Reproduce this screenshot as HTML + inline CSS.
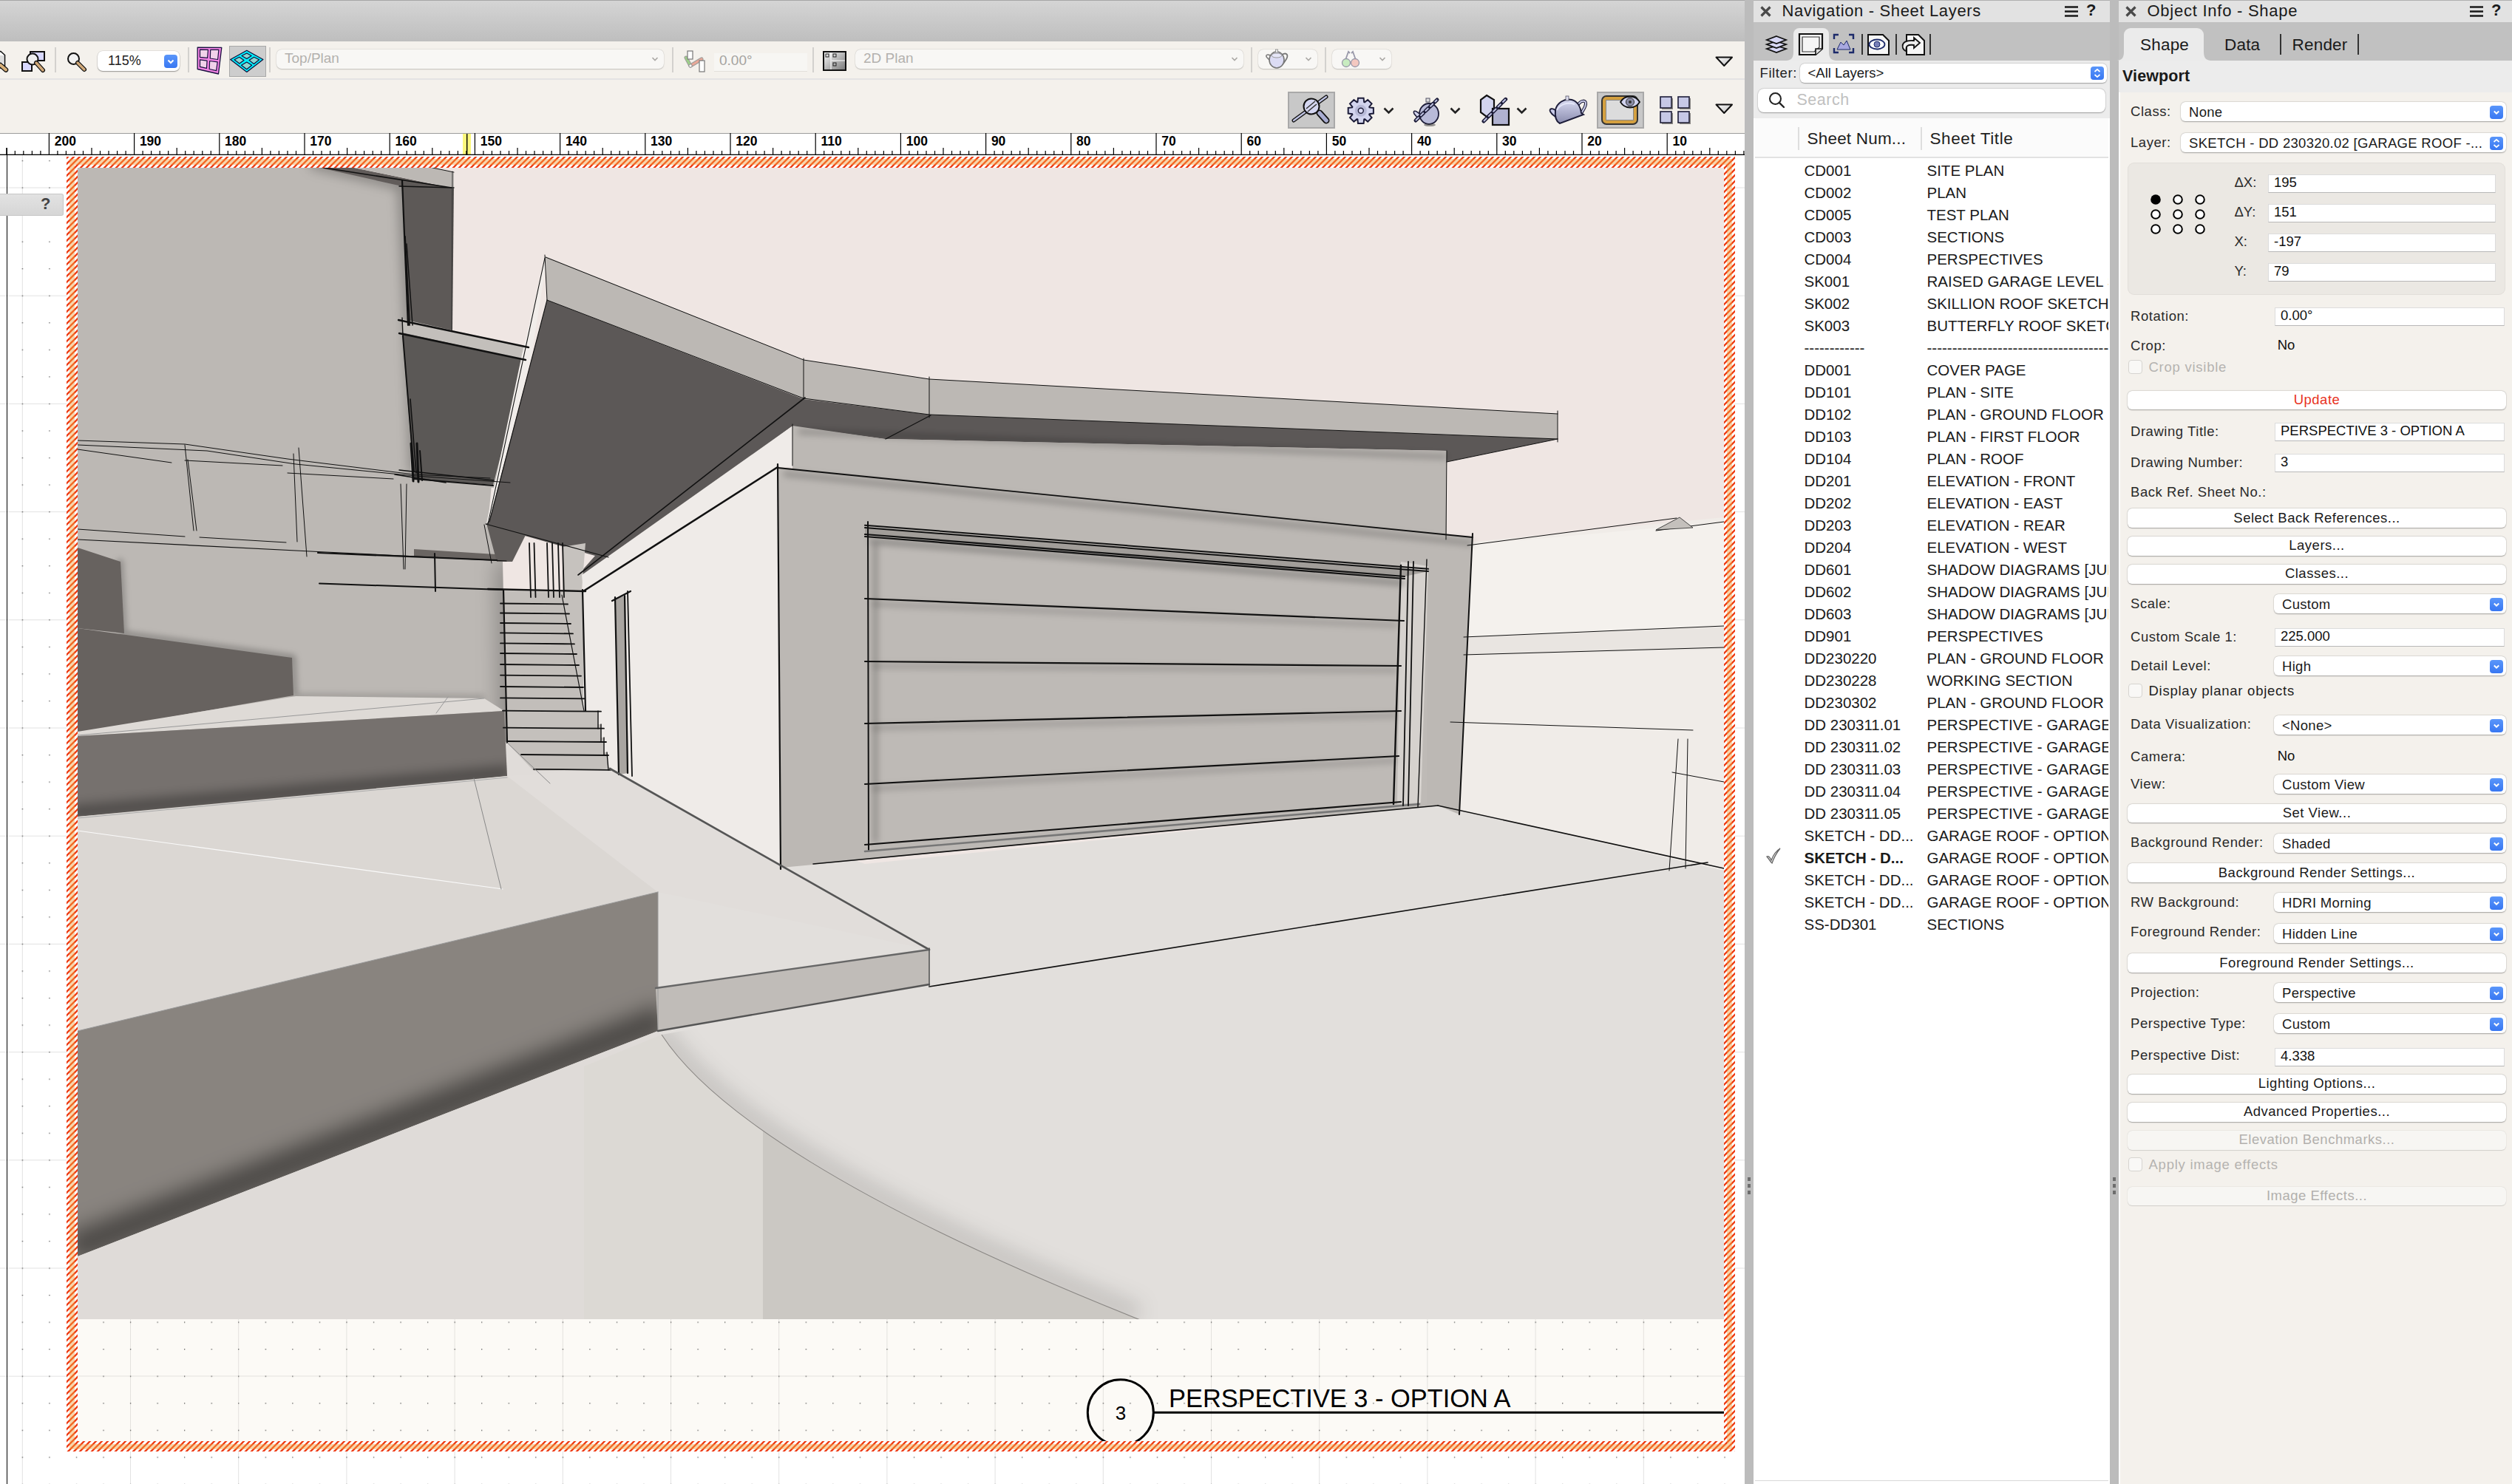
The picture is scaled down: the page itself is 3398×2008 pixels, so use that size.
<!DOCTYPE html>
<html><head><meta charset="utf-8"><style>
html,body{margin:0;padding:0;width:3398px;height:2008px;overflow:hidden;background:#fff;font-family:'Liberation Sans',sans-serif;}
</style></head><body>
<div style="position:absolute;left:0px;top:0px;width:2360px;height:56px;background:linear-gradient(#d5d5d5,#bebebe);"></div>
<div style="position:absolute;left:0px;top:0px;width:2360px;height:1px;background:#a6a6a6;"></div>
<div style="position:absolute;left:0px;top:56px;width:2360px;height:124px;background:#f4f1ec;"></div>
<div style="position:absolute;left:0px;top:106px;width:2360px;height:2px;background:#e4e3e4;"></div>
<svg style="position:absolute;left:0px;top:62px;overflow:visible" width="14" height="38" viewBox="0 0 14 38"><path d="M-4 8 L1 7.5 L6.5 12.5 L6.5 30 L-4 30 Z" fill="#fff" stroke="#111" stroke-width="1.6"/><rect x="-2" y="13" width="7" height="10" fill="#ddd"/><path d="M0.5 26 L8 32.5" stroke="#111" stroke-width="6.5" stroke-linecap="round"/><path d="M0.5 26 L8 32.5" stroke="#d8b078" stroke-width="4" stroke-linecap="round"/></svg>
<svg style="position:absolute;left:29px;top:68px;overflow:visible" width="33" height="30" viewBox="0 0 33 30"><rect x="12" y="2" width="19" height="12" fill="#d8d8ff" stroke="#111" stroke-width="2"/><rect x="1" y="16" width="13" height="12" fill="#d8d8ff" stroke="#111" stroke-width="2"/><circle cx="15" cy="12" r="7.5" fill="#eee" stroke="#111" stroke-width="2"/><path d="M20 17 L29 27" stroke="#111" stroke-width="6" stroke-linecap="round"/><path d="M20 17 L29 27" stroke="#d0a878" stroke-width="3.5" stroke-linecap="round"/></svg>
<div style="position:absolute;left:74px;top:64px;width:2px;height:34px;background:#d3d1ce;"></div>
<svg style="position:absolute;left:90px;top:70px;overflow:visible" width="28" height="28" viewBox="0 0 28 28"><circle cx="9.5" cy="9.5" r="7.5" fill="#f2f2f2" stroke="#111" stroke-width="2"/><path d="M15 15 L24 24" stroke="#111" stroke-width="6" stroke-linecap="round"/><path d="M15 15 L24 24" stroke="#d0a878" stroke-width="3.5" stroke-linecap="round"/></svg>
<div style="position:absolute;left:132px;top:69px;width:111px;height:27px;background:#fff;border-radius:7px;box-shadow:0 1px 1.5px rgba(0,0,0,.35),0 0 0 .5px rgba(0,0,0,.12);"></div>
<div style="position:absolute;left:146.0px;top:72.4px;font-size:18px;line-height:1.15;white-space:nowrap;color:#222;">115%</div>
<div style="position:absolute;left:222px;top:74px;width:18px;height:18px;background:linear-gradient(#5a96fa,#3877f2);border-radius:4px;"></div>
<svg style="position:absolute;left:222px;top:74px;overflow:visible" width="18" height="18" viewBox="0 0 18 18"><path d="M5.5 7.5 L9 11 L12.5 7.5" stroke="#fff" stroke-width="2" fill="none"/></svg>
<div style="position:absolute;left:254px;top:64px;width:2px;height:34px;background:#d3d1ce;"></div>
<svg style="position:absolute;left:0px;top:0px;overflow:visible" width="400" height="110" viewBox="0 0 400 110"><polygon points="267.2,64.1 299.8,64.3 295.5,100 267.2,93.5" fill="#f284e4" stroke="#1a1040" stroke-width="1.3" stroke-linejoin="round"/><polygon points="270.5,67.2 281.5,67.4 280.6,78.4 270.5,77.3" fill="#f1d2ea" stroke="#1a1040" stroke-width="1.2" stroke-linejoin="round"/><polygon points="284.7,67.4 295.9,67.4 294.6,80.5 284.3,79" fill="#f1d2ea" stroke="#1a1040" stroke-width="1.2" stroke-linejoin="round"/><polygon points="270.5,80.8 280.1,82.1 279.5,92.4 270.5,90.4" fill="#f1d2ea" stroke="#1a1040" stroke-width="1.2" stroke-linejoin="round"/><polygon points="283.6,82.5 294.2,83.8 292.6,95.7 283.2,93.5" fill="#f1d2ea" stroke="#1a1040" stroke-width="1.2" stroke-linejoin="round"/></svg>
<div style="position:absolute;left:310px;top:62px;width:50px;height:42px;background:#cdcdcd;border:1.7px solid #a8a8a8;box-sizing:border-box;"></div>
<svg style="position:absolute;left:0px;top:0px;overflow:visible" width="400" height="110" viewBox="0 0 400 110"><polygon points="311.7,80.5 333.8,68.3 355.9,80.5 333.8,97.4" fill="#00f0ff" stroke="#10103a" stroke-width="1.3" stroke-linejoin="round"/><polygon points="327,75.5 333.8,72 340.1,75.5 333.8,79.5" fill="#8ed6d2" stroke="#10103a" stroke-width="1.2" stroke-linejoin="round"/><polygon points="317,80.8 323.7,77.3 330,81.4 323.9,86" fill="#8ed6d2" stroke="#10103a" stroke-width="1.2" stroke-linejoin="round"/><polygon points="337,81.4 343.6,77.3 350.6,80.8 343.4,86.5" fill="#8ed6d2" stroke="#10103a" stroke-width="1.2" stroke-linejoin="round"/><polygon points="326.5,88.2 333.8,84 340.6,88.2 333.8,93.7" fill="#8ed6d2" stroke="#10103a" stroke-width="1.2" stroke-linejoin="round"/></svg>
<div style="position:absolute;left:364px;top:64px;width:2px;height:34px;background:#d3d1ce;"></div>
<div style="position:absolute;left:374px;top:67px;width:524px;height:26px;background:#f8f7f5;border-radius:7px;box-shadow:0 .5px 1.5px rgba(0,0,0,.18),0 0 0 .5px rgba(0,0,0,.06);"></div><div style="position:absolute;left:385.0px;top:68.4px;font-size:19px;line-height:1.15;white-space:nowrap;color:#b3b1ae;">Top/Plan</div><svg style="position:absolute;left:881px;top:76px;overflow:visible" width="10" height="8" viewBox="0 0 10 8"><path d="M1.5 2 L5 5.5 L8.5 2" stroke="#a9a7a4" stroke-width="1.6" fill="none"/></svg>
<div style="position:absolute;left:909px;top:64px;width:2px;height:34px;background:#d3d1ce;"></div>
<svg style="position:absolute;left:922px;top:68px;overflow:visible" width="34" height="32" viewBox="0 0 34 32"><path d="M6 10 L12 21 L27 12" stroke="#555" stroke-width="5" fill="none" stroke-linecap="round" stroke-linejoin="round" opacity=".55"/><path d="M6 10 L12 21" stroke="#9ed08a" stroke-width="3" stroke-linecap="round"/><path d="M12 21 L27 12" stroke="#eaa898" stroke-width="3" stroke-linecap="round"/><rect x="8" y="1" width="7" height="11" fill="#fff" stroke="#777" stroke-width="1.2"/><rect x="24" y="14" width="7" height="15" fill="#fff" stroke="#777" stroke-width="1.2"/><circle cx="12" cy="21" r="2.2" fill="#fff" stroke="#888"/></svg>
<div style="position:absolute;left:966px;top:72px;width:126px;height:25px;background:#f7f6f3;border-bottom:1px solid #e2dfdb;box-sizing:border-box;"></div>
<div style="position:absolute;left:973.0px;top:71.4px;font-size:19px;line-height:1.15;white-space:nowrap;color:#a5a3a0;">0.00°</div>
<div style="position:absolute;left:1099px;top:64px;width:2px;height:34px;background:#d3d1ce;"></div>
<svg style="position:absolute;left:1113px;top:69px;overflow:visible" width="32" height="27" viewBox="0 0 32 27"><defs><linearGradient id="lg1" x1="0" y1="0" x2="1" y2="1"><stop offset="0" stop-color="#fafafa"/><stop offset="1" stop-color="#777"/></linearGradient></defs><rect x="1" y="1" width="30" height="25" fill="url(#lg1)" stroke="#111" stroke-width="2"/><path d="M11 2 V25 M12 13 H30" stroke="#fff" stroke-width="1"/><rect x="4" y="4" width="4" height="4" fill="none" stroke="#222" stroke-width="1"/><rect x="14" y="4" width="4" height="4" fill="none" stroke="#222" stroke-width="1"/><rect x="14" y="16" width="4" height="4" fill="none" stroke="#222" stroke-width="1"/></svg>
<div style="position:absolute;left:1157px;top:67px;width:525px;height:26px;background:#f8f7f5;border-radius:7px;box-shadow:0 .5px 1.5px rgba(0,0,0,.18),0 0 0 .5px rgba(0,0,0,.06);"></div><div style="position:absolute;left:1168.0px;top:68.4px;font-size:19px;line-height:1.15;white-space:nowrap;color:#b3b1ae;">2D Plan</div><svg style="position:absolute;left:1665px;top:76px;overflow:visible" width="10" height="8" viewBox="0 0 10 8"><path d="M1.5 2 L5 5.5 L8.5 2" stroke="#a9a7a4" stroke-width="1.6" fill="none"/></svg>
<div style="position:absolute;left:1692px;top:64px;width:2px;height:34px;background:#d3d1ce;"></div>
<div style="position:absolute;left:1702px;top:67px;width:80px;height:26px;background:#f8f7f5;border-radius:7px;box-shadow:0 .5px 1.5px rgba(0,0,0,.18),0 0 0 .5px rgba(0,0,0,.06);"></div><svg style="position:absolute;left:1765px;top:76px;overflow:visible" width="10" height="8" viewBox="0 0 10 8"><path d="M1.5 2 L5 5.5 L8.5 2" stroke="#a9a7a4" stroke-width="1.6" fill="none"/></svg>
<svg style="position:absolute;left:1710px;top:66px;overflow:visible" width="36" height="28" viewBox="0 0 36 28"><path d="M10 10 C4 6 1 9 4 12 L9 17" fill="none" stroke="#777" stroke-width="1.5"/><path d="M24 8 C31 4 33 9 30 14 L26 20" fill="none" stroke="#777" stroke-width="1.8"/><ellipse cx="17" cy="15" rx="10" ry="11" fill="#dcdcf4" stroke="#777" stroke-width="1.6"/><ellipse cx="17" cy="9" rx="7" ry="3" fill="#e6e6f8" stroke="#999" stroke-width="1"/><rect x="15.5" y="1" width="3" height="4" fill="#eee" stroke="#888" stroke-width=".8"/></svg>
<div style="position:absolute;left:1792px;top:64px;width:2px;height:34px;background:#d3d1ce;"></div>
<div style="position:absolute;left:1802px;top:67px;width:80px;height:26px;background:#f8f7f5;border-radius:7px;box-shadow:0 .5px 1.5px rgba(0,0,0,.18),0 0 0 .5px rgba(0,0,0,.06);"></div><svg style="position:absolute;left:1865px;top:76px;overflow:visible" width="10" height="8" viewBox="0 0 10 8"><path d="M1.5 2 L5 5.5 L8.5 2" stroke="#a9a7a4" stroke-width="1.6" fill="none"/></svg>
<svg style="position:absolute;left:1812px;top:68px;overflow:visible" width="30" height="24" viewBox="0 0 30 24"><path d="M7 16 L12 2 L14 4 M23 16 L18 2 L16 4" fill="none" stroke="#99a" stroke-width="1.8"/><circle cx="9" cy="17" r="5.5" fill="#c8ecc0" stroke="#99a" stroke-width="1.3"/><circle cx="21" cy="17" r="5.5" fill="#f4c8c0" stroke="#99a" stroke-width="1.3"/><path d="M14 16 H16" stroke="#99a" stroke-width="1.5"/></svg>
<svg style="position:absolute;left:2320px;top:76px;overflow:visible" width="25" height="15" viewBox="0 0 25 15"><defs><linearGradient id="tg" x1="0" y1="0" x2="1" y2="1"><stop offset="0" stop-color="#fff"/><stop offset="1" stop-color="#bbb"/></linearGradient></defs><path d="M1.5 1.5 H23 L12.25 13 Z" fill="url(#tg)" stroke="#111" stroke-width="2" stroke-linejoin="round"/></svg>
<div style="position:absolute;left:1742px;top:124px;width:64px;height:50px;background:#c8c8c8;border:2px solid #a9a9a9;box-sizing:border-box;"></div>
<svg style="position:absolute;left:1742px;top:124px;overflow:visible" width="64" height="50" viewBox="0 0 64 50"><path d="M8 39 L52 7" stroke="#111" stroke-width="5" stroke-linecap="round"/><path d="M8 39 L52 7" stroke="#c0c4e4" stroke-width="2.2" stroke-linecap="round"/><path d="M43 29 L52 39" stroke="#111" stroke-width="9" stroke-linecap="round"/><path d="M43 29 L52 39" stroke="#a8acd0" stroke-width="5.5" stroke-linecap="round"/><circle cx="32" cy="20" r="10.5" fill="#d4d6f0" stroke="#111" stroke-width="2"/><path d="M25 23 L37 13 M27 27 L39 17" stroke="#333" stroke-width="1.5"/></svg>
<svg style="position:absolute;left:0px;top:0px;overflow:visible" width="2360" height="180" viewBox="0 0 2360 180"><polygon points="1857.9,146.0 1857.9,153.6 1852.5,154.2 1852.2,155.0 1855.6,159.2 1850.2,164.6 1846.0,161.2 1845.2,161.5 1844.6,166.9 1837.0,166.9 1836.4,161.5 1835.6,161.2 1831.4,164.6 1826.0,159.2 1829.4,155.0 1829.1,154.2 1823.7,153.6 1823.7,146.0 1829.1,145.4 1829.4,144.6 1826.0,140.4 1831.4,135.0 1835.6,138.4 1836.4,138.1 1837.0,132.7 1844.6,132.7 1845.2,138.1 1846.0,138.4 1850.2,135.0 1855.6,140.4 1852.2,144.6 1852.5,145.4" fill="#d2d4ee" stroke="#1c1c38" stroke-width="2"/><circle cx="1840.8" cy="149.8" r="8" fill="#b8bad8"/><circle cx="1840.8" cy="149.8" r="3.5" fill="#dcdcf6" stroke="#1c1c38" stroke-width="1.4"/></svg>
<svg style="position:absolute;left:1871px;top:145px;overflow:visible" width="16" height="10" viewBox="0 0 16 10"><path d="M1.5 1.5 L7.5 7.5 L13.5 1.5" stroke="#222" stroke-width="2.6" fill="none"/></svg>
<svg style="position:absolute;left:1961px;top:145px;overflow:visible" width="16" height="10" viewBox="0 0 16 10"><path d="M1.5 1.5 L7.5 7.5 L13.5 1.5" stroke="#222" stroke-width="2.6" fill="none"/></svg>
<svg style="position:absolute;left:2051px;top:145px;overflow:visible" width="16" height="10" viewBox="0 0 16 10"><path d="M1.5 1.5 L7.5 7.5 L13.5 1.5" stroke="#222" stroke-width="2.6" fill="none"/></svg>
<svg style="position:absolute;left:1910px;top:130px;overflow:visible" width="44" height="42" viewBox="0 0 44 42"><ellipse cx="23" cy="24" rx="13" ry="14" fill="#b8bad8" stroke="#1c1c38" stroke-width="1.8"/><path d="M10 24 C4 18 1 20 3 24 L8 30" fill="#d2d4ee" stroke="#1c1c38" stroke-width="1.6"/><rect x="19" y="3" width="5" height="5" fill="#ddd" stroke="#556" stroke-width="1"/><path d="M5 33 L34 5" stroke="#1c1c38" stroke-width="5" stroke-dasharray="6 3" stroke-linecap="round"/><path d="M5 33 L34 5" stroke="#c0c4e4" stroke-width="2" stroke-dasharray="6 3"/><ellipse cx="24" cy="39" rx="8" ry="2" fill="#333" opacity=".5"/></svg>
<svg style="position:absolute;left:2000px;top:126px;overflow:visible" width="46" height="46" viewBox="0 0 46 46"><path d="M11 3 L21 9 L21 26 L11 32 L3 26 L3 9 Z" fill="#d2d4ee" stroke="#111" stroke-width="2.2"/><rect x="19" y="21" width="22" height="22" fill="#b0b2d0" stroke="#111" stroke-width="2.2"/><path d="M7 38 L38 7" stroke="#1c1c38" stroke-width="5" stroke-dasharray="6 3" stroke-linecap="round"/><path d="M7 38 L38 7" stroke="#c0c4e4" stroke-width="2" stroke-dasharray="6 3"/></svg>
<svg style="position:absolute;left:2094px;top:129px;overflow:visible" width="50" height="40" viewBox="0 0 50 40"><defs><linearGradient id="tpg" x1="0" y1="0" x2="0" y2="1"><stop offset="0" stop-color="#d8daf2"/><stop offset="1" stop-color="#8a8cae"/></linearGradient></defs><path d="M40 14 C44 6 52 6 51 12 C50 18 46 22 43 27" fill="none" stroke="#1c1c38" stroke-width="4.2"/><path d="M40 14 C44 6 52 6 51 12 C50 18 46 22 43 27" fill="none" stroke="#c8cae8" stroke-width="2"/><path d="M12 22 C6 16 1 18 3 22 C5 26 9 28 11 30" fill="#c8cae8" stroke="#1c1c38" stroke-width="1.8"/><path d="M10 20 C12 10 22 4 32 6 C40 8 44 16 45 24 L48 26 L16 38 C12 36 9 30 10 20 Z" fill="url(#tpg)" stroke="#1c1c38" stroke-width="2"/><path d="M12 20 C16 12 26 9 36 12" fill="none" stroke="#e4e6f8" stroke-width="2"/><rect x="24" y="1" width="4" height="6" fill="#dde" stroke="#556" stroke-width=".8"/></svg>
<div style="position:absolute;left:2160px;top:124px;width:64px;height:50px;background:#c8c8c8;border:2px solid #a9a9a9;box-sizing:border-box;"></div>
<svg style="position:absolute;left:2160px;top:124px;overflow:visible" width="64" height="50" viewBox="0 0 64 50"><rect x="7" y="6" width="48" height="38" rx="6" fill="#d4a040" stroke="#333" stroke-width="2"/><rect x="12.5" y="11.5" width="37" height="27" fill="#dcdcdc" stroke="#888" stroke-width="1"/><path d="M32 14 C38 4 52 4 58 14 C52 24 38 24 32 14 Z" fill="#d0d2ee" stroke="#111" stroke-width="1.8"/><circle cx="45" cy="14" r="5.5" fill="#8c8ea8" stroke="#333" stroke-width="1"/><circle cx="45" cy="14" r="2" fill="#333"/></svg>
<svg style="position:absolute;left:2244px;top:129px;overflow:visible" width="46" height="42" viewBox="0 0 46 42"><g fill="#c6c8e6" stroke="#1c1c38" stroke-width="1.6"><rect x="2" y="2" width="15" height="15"/><rect x="26" y="2" width="15" height="15"/><rect x="2" y="22" width="15" height="15"/><rect x="26" y="22" width="15" height="15"/></g><g fill="#444" opacity=".6"><rect x="17" y="4" width="2" height="15"/><rect x="4" y="17" width="15" height="2"/><rect x="41" y="4" width="2" height="15"/><rect x="28" y="17" width="15" height="2"/><rect x="17" y="24" width="2" height="15"/><rect x="4" y="37" width="15" height="2"/><rect x="41" y="24" width="2" height="15"/><rect x="28" y="37" width="15" height="2"/></g></svg>
<svg style="position:absolute;left:2320px;top:140px;overflow:visible" width="25" height="15" viewBox="0 0 25 15"><defs><linearGradient id="tg" x1="0" y1="0" x2="1" y2="1"><stop offset="0" stop-color="#fff"/><stop offset="1" stop-color="#bbb"/></linearGradient></defs><path d="M1.5 1.5 H23 L12.25 13 Z" fill="url(#tg)" stroke="#111" stroke-width="2" stroke-linejoin="round"/></svg>
<svg style="position:absolute;left:0px;top:180px;overflow:visible" width="2360" height="31" viewBox="0 0 2360 31"><rect x="0" y="0" width="2360" height="30" fill="#fff"/><rect x="0" y="0" width="2360" height="1" fill="#9c9c9c"/><rect x="626" y="1" width="11" height="28" fill="#fbf77c"/><path d="M8.8 20V29 M20.3 24V29 M31.8 24V29 M43.4 24V29 M54.9 24V29 M66.4 0V29 M77.9 24V29 M89.4 24V29 M101.0 24V29 M112.5 24V29 M124.0 20V29 M135.5 24V29 M147.0 24V29 M158.6 24V29 M170.1 24V29 M181.6 0V29 M193.1 24V29 M204.6 24V29 M216.2 24V29 M227.7 24V29 M239.2 20V29 M250.7 24V29 M262.2 24V29 M273.8 24V29 M285.3 24V29 M296.8 0V29 M308.3 24V29 M319.8 24V29 M331.4 24V29 M342.9 24V29 M354.4 20V29 M365.9 24V29 M377.4 24V29 M389.0 24V29 M400.5 24V29 M412.0 0V29 M423.5 24V29 M435.0 24V29 M446.6 24V29 M458.1 24V29 M469.6 20V29 M481.1 24V29 M492.6 24V29 M504.2 24V29 M515.7 24V29 M527.2 0V29 M538.7 24V29 M550.2 24V29 M561.8 24V29 M573.3 24V29 M584.8 20V29 M596.3 24V29 M607.8 24V29 M619.4 24V29 M630.9 24V29 M642.4 0V29 M653.9 24V29 M665.4 24V29 M677.0 24V29 M688.5 24V29 M700.0 20V29 M711.5 24V29 M723.0 24V29 M734.6 24V29 M746.1 24V29 M757.6 0V29 M769.1 24V29 M780.6 24V29 M792.2 24V29 M803.7 24V29 M815.2 20V29 M826.7 24V29 M838.2 24V29 M849.8 24V29 M861.3 24V29 M872.8 0V29 M884.3 24V29 M895.8 24V29 M907.4 24V29 M918.9 24V29 M930.4 20V29 M941.9 24V29 M953.4 24V29 M965.0 24V29 M976.5 24V29 M988.0 0V29 M999.5 24V29 M1011.0 24V29 M1022.6 24V29 M1034.1 24V29 M1045.6 20V29 M1057.1 24V29 M1068.6 24V29 M1080.2 24V29 M1091.7 24V29 M1103.2 0V29 M1114.7 24V29 M1126.2 24V29 M1137.8 24V29 M1149.3 24V29 M1160.8 20V29 M1172.3 24V29 M1183.8 24V29 M1195.4 24V29 M1206.9 24V29 M1218.4 0V29 M1229.9 24V29 M1241.4 24V29 M1253.0 24V29 M1264.5 24V29 M1276.0 20V29 M1287.5 24V29 M1299.0 24V29 M1310.6 24V29 M1322.1 24V29 M1333.6 0V29 M1345.1 24V29 M1356.6 24V29 M1368.2 24V29 M1379.7 24V29 M1391.2 20V29 M1402.7 24V29 M1414.2 24V29 M1425.8 24V29 M1437.3 24V29 M1448.8 0V29 M1460.3 24V29 M1471.8 24V29 M1483.4 24V29 M1494.9 24V29 M1506.4 20V29 M1517.9 24V29 M1529.4 24V29 M1541.0 24V29 M1552.5 24V29 M1564.0 0V29 M1575.5 24V29 M1587.0 24V29 M1598.6 24V29 M1610.1 24V29 M1621.6 20V29 M1633.1 24V29 M1644.6 24V29 M1656.2 24V29 M1667.7 24V29 M1679.2 0V29 M1690.7 24V29 M1702.2 24V29 M1713.8 24V29 M1725.3 24V29 M1736.8 20V29 M1748.3 24V29 M1759.8 24V29 M1771.4 24V29 M1782.9 24V29 M1794.4 0V29 M1805.9 24V29 M1817.4 24V29 M1829.0 24V29 M1840.5 24V29 M1852.0 20V29 M1863.5 24V29 M1875.0 24V29 M1886.6 24V29 M1898.1 24V29 M1909.6 0V29 M1921.1 24V29 M1932.6 24V29 M1944.2 24V29 M1955.7 24V29 M1967.2 20V29 M1978.7 24V29 M1990.2 24V29 M2001.8 24V29 M2013.3 24V29 M2024.8 0V29 M2036.3 24V29 M2047.8 24V29 M2059.4 24V29 M2070.9 24V29 M2082.4 20V29 M2093.9 24V29 M2105.4 24V29 M2117.0 24V29 M2128.5 24V29 M2140.0 0V29 M2151.5 24V29 M2163.0 24V29 M2174.6 24V29 M2186.1 24V29 M2197.6 20V29 M2209.1 24V29 M2220.6 24V29 M2232.2 24V29 M2243.7 24V29 M2255.2 0V29 M2266.7 24V29 M2278.2 24V29 M2289.8 24V29 M2301.3 24V29 M2312.8 20V29 M2324.3 24V29 M2335.8 24V29 M2347.4 24V29 M2358.9 24V29" stroke="#000" stroke-width="1.2" fill="none"/><rect x="631" y="1" width="1.4" height="28" fill="#000"/><rect x="0" y="28.7" width="2360" height="1.4" fill="#000"/><text x="73.7" y="17" font-family="Liberation Sans" font-weight="bold" font-size="17.5">200</text><text x="188.9" y="17" font-family="Liberation Sans" font-weight="bold" font-size="17.5">190</text><text x="304.1" y="17" font-family="Liberation Sans" font-weight="bold" font-size="17.5">180</text><text x="419.3" y="17" font-family="Liberation Sans" font-weight="bold" font-size="17.5">170</text><text x="534.5" y="17" font-family="Liberation Sans" font-weight="bold" font-size="17.5">160</text><text x="649.7" y="17" font-family="Liberation Sans" font-weight="bold" font-size="17.5">150</text><text x="764.9" y="17" font-family="Liberation Sans" font-weight="bold" font-size="17.5">140</text><text x="880.1" y="17" font-family="Liberation Sans" font-weight="bold" font-size="17.5">130</text><text x="995.3" y="17" font-family="Liberation Sans" font-weight="bold" font-size="17.5">120</text><text x="1110.5" y="17" font-family="Liberation Sans" font-weight="bold" font-size="17.5">110</text><text x="1225.7" y="17" font-family="Liberation Sans" font-weight="bold" font-size="17.5">100</text><text x="1340.9" y="17" font-family="Liberation Sans" font-weight="bold" font-size="17.5">90</text><text x="1456.1" y="17" font-family="Liberation Sans" font-weight="bold" font-size="17.5">80</text><text x="1571.3" y="17" font-family="Liberation Sans" font-weight="bold" font-size="17.5">70</text><text x="1686.5" y="17" font-family="Liberation Sans" font-weight="bold" font-size="17.5">60</text><text x="1801.7" y="17" font-family="Liberation Sans" font-weight="bold" font-size="17.5">50</text><text x="1916.9" y="17" font-family="Liberation Sans" font-weight="bold" font-size="17.5">40</text><text x="2032.1" y="17" font-family="Liberation Sans" font-weight="bold" font-size="17.5">30</text><text x="2147.3" y="17" font-family="Liberation Sans" font-weight="bold" font-size="17.5">20</text><text x="2262.5" y="17" font-family="Liberation Sans" font-weight="bold" font-size="17.5">10</text></svg>
<svg style="position:absolute;left:0px;top:210px;overflow:visible" width="2360" height="1798" viewBox="0 0 2360 1798"><defs><pattern id="gdots" patternUnits="userSpaceOnUse" width="36.55" height="36.55" x="29.7" y="6.85"><rect x="0" y="0" width="1.3" height="1.3" fill="#3a3a3a"/></pattern></defs><rect x="0" y="0" width="2360" height="1798" fill="#fff"/><path d="M30.3 0V1798 M176.5 0V1798 M322.7 0V1798 M468.9 0V1798 M615.1 0V1798 M761.3 0V1798 M907.5 0V1798 M1053.7 0V1798 M1199.9 0V1798 M1346.1 0V1798 M1492.3 0V1798 M1638.5 0V1798 M1784.7 0V1798 M1930.9 0V1798 M2077.1 0V1798 M2223.3 0V1798 M0 44.0H2360 M0 190.2H2360 M0 336.4H2360 M0 482.6H2360 M0 628.8H2360 M0 775.0H2360 M0 921.2H2360 M0 1067.4H2360 M0 1213.6H2360 M0 1359.8H2360 M0 1506.0H2360 M0 1652.2H2360" stroke="#e2e2e2" stroke-width="1" fill="none"/><rect x="0" y="0" width="2360" height="1798" fill="url(#gdots)" opacity=".85"/></svg>
<div style="position:absolute;left:9px;top:200px;width:1px;height:1808px;background:#000;"></div>
<svg style="position:absolute;left:0;top:0" width="2360" height="2008" viewBox="0 0 2360 2008"><defs><filter id="blur4" filterUnits="userSpaceOnUse" x="0" y="0" width="2400" height="2000"><feGaussianBlur stdDeviation="4"/></filter><filter id="blur8" filterUnits="userSpaceOnUse" x="0" y="0" width="2400" height="2000"><feGaussianBlur stdDeviation="8"/></filter><filter id="blur14" filterUnits="userSpaceOnUse" x="0" y="0" width="2400" height="2000"><feGaussianBlur stdDeviation="14"/></filter></defs>
<defs><pattern id="hatch" patternUnits="userSpaceOnUse" width="8" height="8" patternTransform="translate(0,0)"><path d="M-2 2 L2 -2 M0 8 L8 0 M6 10 L10 6" stroke="#ee3a12" stroke-width="2.3"/></pattern><linearGradient id="gshadeL" x1="0" y1="0" x2="1" y2="0"><stop offset="0" stop-color="#bcb8b4"/><stop offset="1" stop-color="#c4c0bc"/></linearGradient></defs>
<path fill-rule="evenodd" fill="#fff" d="M90 212 H2347 V1964 H90 Z M105 227 H2332 V1950 H105 Z"/>
<path fill-rule="evenodd" fill="#f8d6ac" d="M94 215 H2343 V1961 H94 Z M101 223 H2336 V1954 H101 Z"/>
<path fill-rule="evenodd" fill="url(#hatch)" d="M90 212 H2347 V1964 H90 Z M105 227 H2332 V1950 H105 Z"/>
<defs><pattern id="hatch2" patternUnits="userSpaceOnUse" width="8" height="8"><path d="M-2 2 L2 -2 M0 8 L8 0 M6 10 L10 6" stroke="#f26a26" stroke-width="2.4"/></pattern></defs>
<path fill-rule="evenodd" fill="#f8d6ac" d="M94 215 H2343 V1961 H94 Z M101 223 H2336 V1954 H101 Z"/>
<path fill-rule="evenodd" fill="url(#hatch2)" d="M94 215 H2343 V1961 H94 Z M101 223 H2336 V1954 H101 Z"/>
<rect x="105" y="1785" width="2227" height="165" fill="#fcfaf6"/>
<path d="M176.5 1785V1950 M322.7 1785V1950 M468.9 1785V1950 M615.1 1785V1950 M761.3 1785V1950 M907.5 1785V1950 M1053.7 1785V1950 M1199.9 1785V1950 M1346.1 1785V1950 M1492.3 1785V1950 M1638.5 1785V1950 M1784.7 1785V1950 M1930.9 1785V1950 M2077.1 1785V1950 M2223.3 1785V1950 M105 1862H2332" stroke="#e4e2de" stroke-width="1"/>
<rect x="105" y="1785" width="2227" height="165" fill="url(#gdots2)" opacity=".85"/>
<defs><pattern id="gdots2" patternUnits="userSpaceOnUse" width="36.55" height="36.55" x="29.7" y="34.10"><rect x="0" y="0" width="1.3" height="1.3" fill="#3a3a3a"/></pattern></defs>
<svg x="105" y="227" width="2227" height="1558" viewBox="105 227 2227 1558" overflow="hidden">
<polygon points="105,227 2332,227 2332,1785 105,1785" fill="#efe6e3" />
<polygon points="1975,735 2332,700 2332,1180 1945,1090" fill="#f0ece8" />
<polygon points="1979,862 2332,848 2332,878 1978,887" fill="#e9e5e1" />
<polygon points="1984,738 2332,706 2332,848 1979,862" fill="#f4f1ed" />
<polygon points="105,1105 686,1050 825,1040 1170,1169 1945,1090 2332,1178 2332,1785 105,1785" fill="#e2dfdc" />
<polygon points="105,227 438,227 544,246 552,440 545,432 544,450 560,640 666,645 660,709 680,760 686,1050 105,1105" fill="#bcb8b4" />
<clipPath id="cp1"><polygon points="105,227 438,227 544,246 552,440 545,432 544,450 560,640 666,645 660,709 680,760 686,1050 105,1105"/></clipPath><g clip-path="url(#cp1)"><polyline points="420,220 545,250 555,440 562,640" fill="none" stroke="#000" stroke-opacity="0.3" stroke-width="14" filter="url(#blur8)"/></g>
<clipPath id="cp2"><polygon points="105,227 438,227 544,246 552,440 545,432 544,450 560,640 666,645 660,709 680,760 686,1050 105,1105"/></clipPath><g clip-path="url(#cp2)"><polyline points="162,757 167,858 396,890 398,942" fill="none" stroke="#000" stroke-opacity="0.28" stroke-width="8" filter="url(#blur4)"/></g>
<clipPath id="cp3"><polygon points="105,227 438,227 544,246 552,440 545,432 544,450 560,640 666,645 660,709 680,760 686,1050 105,1105"/></clipPath><g clip-path="url(#cp3)"><polyline points="686,760 690,1050" fill="none" stroke="#000" stroke-opacity="0.25" stroke-width="30" filter="url(#blur14)"/></g>
<clipPath id="cp4"><polygon points="105,227 438,227 544,246 552,440 545,432 544,450 560,640 666,645 660,709 680,760 686,1050 105,1105"/></clipPath><g clip-path="url(#cp4)"><polyline points="400,943 655,945" fill="none" stroke="#000" stroke-opacity="0.15" stroke-width="10" filter="url(#blur4)"/></g>
<polygon points="433,227 479,227 612,254.6 544,252" fill="#615c5a" />
<polygon points="479,227 585,227 614,233 614,255 611,254" fill="#bcb8b4" />
<polygon points="544,246 614,255 612,447 552,440" fill="#5d5957" />
<polygon points="545,432 715,470 711,487 544,450" fill="#c3bfbb" />
<polygon points="555,600 700,600 690,660 555,660" fill="#bcb8b4" />
<polygon points="544,450 711,487 667,656 560,648" fill="#5b5856" />
<polygon points="560,743 686,751 686,759 560,753" fill="#6a6562" />
<polygon points="706,480 737,349 740,349 719,480 662,706 657,713" fill="#f1edea" />
<polygon points="711,487 735,380 706,480" fill="#f1edea" />
<polygon points="738,347 1087,487 1257,513 2107,560 2107,594 1257,561 1087,540 740,406" fill="#bcb8b4" />
<polygon points="740,406 1087,540 1257,561 2107,594 1957,625 1957,610 1197,594 1071,577 800,776 782,778 805,752 657,710 662,704" fill="#5c5857" />
<polygon points="658,708 712,722 693,760 672,760" fill="#605c5a" />
<polygon points="761,740 792,735 787,798 761,798" fill="#c6c2be" />
<polygon points="787,778 1071,577 1072,632 1052,632 1056,1172 825,1040 789,962 789,800" fill="#efebe8" />
<polygon points="1072,576 1197,594 1957,610 1957,725 1072,635" fill="#bcb8b4" />
<polygon points="1052,632 1992,727 1974,1102 1945,1090 1057,1174" fill="#bcb8b4" />
<polygon points="1174,712 1932,768 1930,1088 1170,1145" fill="#bebab6" />
<polygon points="1895,760 1932,766 1922,1086 1890,1088" fill="#d6d2ce" />
<polygon points="680,1000 722,1040 826,1038 850,1062 680,1062" fill="#e0dcd9" />
<polygon points="681,798 789,800 789,962 809,962 809,980 813,980 813,998 817,998 817,1018 821,1018 823,1041 722,1043 686,1005" fill="#c4c0bc" />
<polygon points="681,800 760,805 789,962 686,962" fill="#c2beba" />
<polygon points="105,741 163,760 168,857 105,850" fill="#67625f" />
<polygon points="105,850 395,890 397,941 105,992" fill="#67625f" />
<polygon points="105,990 400,942 655,945 682,962 105,996" fill="#dedad6" />
<polygon points="105,996 682,962 686,1050 400,1080 105,1105" fill="#76716e" />
<clipPath id="cp5"><polygon points="105,996 682,962 686,1050 400,1080 105,1105"/></clipPath><g clip-path="url(#cp5)"><polyline points="95,1100 690,1045" fill="none" stroke="#000" stroke-opacity="0.35" stroke-width="18" filter="url(#blur8)"/></g>
<polygon points="105,1105 686,1050 890,1207 105,1395" fill="#dbd7d3" />
<polygon points="686,1050 825,1040 1257,1285 890,1207" fill="#e1ddda" />
<defs><linearGradient id="gblk" x1="0" y1="0" x2="0.25" y2="1"><stop offset="0" stop-color="#8b8783"/><stop offset=".75" stop-color="#85807c"/><stop offset="1" stop-color="#5e5a57"/></linearGradient></defs>
<polygon points="105,1395 890,1207 890,1395 105,1700" fill="#89847f" />
<clipPath id="cp6"><polygon points="105,1395 890,1207 890,1395 105,1700"/></clipPath><g clip-path="url(#cp6)"><polyline points="95,1690 900,1378" fill="none" stroke="#000" stroke-opacity="0.45" stroke-width="40" filter="url(#blur14)"/></g>
<polygon points="887,1337 1257,1285 1257,1332 890,1395" fill="#c0bcb8" />
<path d="M105 1700 L890 1395 L895 1400 C960 1500 1150 1630 1545 1787 L105 1787 Z" fill="#dfdbd8"/>
<path d="M790 1443 L895 1400 C920.2 1438.8 964.4 1482.2 1032 1529.9 L1032 1787 L790 1787 Z" fill="#dcd9d4"/>
<path d="M1032 1529.9 C1138.5 1605.1 1303.4 1691 1545 1787 L1032 1787 Z" fill="#cbc8c3"/>
<polyline points="544,244 552,440" fill="none" stroke="#111" stroke-width="2.2" stroke-linecap="round" stroke-linejoin="round" />
<polyline points="438,227 611,254" fill="none" stroke="#111" stroke-width="1.6" stroke-linecap="round" stroke-linejoin="round" />
<polyline points="540,252 614,254" fill="none" stroke="#111" stroke-width="1.4" stroke-linecap="round" stroke-linejoin="round" />
<polyline points="612,232 611,447" fill="none" stroke="#333" stroke-width="1.0" stroke-linecap="round" stroke-linejoin="round" />
<polyline points="585,227 614,233" fill="none" stroke="#111" stroke-width="1.0" stroke-linecap="round" stroke-linejoin="round" />
<polyline points="548,320 554,440" fill="none" stroke="#111" stroke-width="1.8" stroke-linecap="round" stroke-linejoin="round" />
<polyline points="550,330 558,440" fill="none" stroke="#111" stroke-width="1.5" stroke-linecap="round" stroke-linejoin="round" />
<polyline points="539,433 715,470" fill="none" stroke="#111" stroke-width="2.4" stroke-linecap="round" stroke-linejoin="round" />
<polyline points="540,451 711,487" fill="none" stroke="#111" stroke-width="2.4" stroke-linecap="round" stroke-linejoin="round" />
<polyline points="544,430 545,455" fill="none" stroke="#111" stroke-width="1.4" stroke-linecap="round" stroke-linejoin="round" />
<polyline points="545,455 560,638" fill="none" stroke="#111" stroke-width="2.0" stroke-linecap="round" stroke-linejoin="round" />
<polyline points="555,540 563,640" fill="none" stroke="#111" stroke-width="1.6" stroke-linecap="round" stroke-linejoin="round" />
<polyline points="556,600 559,651" fill="none" stroke="#111" stroke-width="3.0" stroke-linecap="round" stroke-linejoin="round" />
<polyline points="564,600 566,652" fill="none" stroke="#111" stroke-width="3.0" stroke-linecap="round" stroke-linejoin="round" />
<polyline points="568,610 571,650" fill="none" stroke="#111" stroke-width="2.0" stroke-linecap="round" stroke-linejoin="round" />
<polyline points="540,636 668,650" fill="none" stroke="#111" stroke-width="1.4" stroke-linecap="round" stroke-linejoin="round" />
<polyline points="534,642 603,653" fill="none" stroke="#111" stroke-width="1.6" stroke-linecap="round" stroke-linejoin="round" />
<polyline points="560,648 667,657" fill="none" stroke="#111" stroke-width="2.0" stroke-linecap="round" stroke-linejoin="round" />
<polyline points="737,345 740,406" fill="none" stroke="#111" stroke-width="1.0" stroke-linecap="round" stroke-linejoin="round" />
<polyline points="737,349 660,709" fill="none" stroke="#111" stroke-width="1.1" stroke-linecap="round" stroke-linejoin="round" />
<polyline points="740,406 662,706" fill="none" stroke="#111" stroke-width="1.1" stroke-linecap="round" stroke-linejoin="round" />
<polyline points="738,348 1087,487 1257,513 2107,560" fill="none" stroke="#111" stroke-width="1.0" stroke-linecap="round" stroke-linejoin="round" />
<polyline points="740,406 1087,539 1257,561 2107,594" fill="none" stroke="#111" stroke-width="1.0" stroke-linecap="round" stroke-linejoin="round" />
<polyline points="1087,485 1087,540" fill="none" stroke="#111" stroke-width="1.0" stroke-linecap="round" stroke-linejoin="round" />
<polyline points="1257,510 1257,565" fill="none" stroke="#111" stroke-width="1.0" stroke-linecap="round" stroke-linejoin="round" />
<polyline points="2107,556 2107,598" fill="none" stroke="#111" stroke-width="1.0" stroke-linecap="round" stroke-linejoin="round" />
<polyline points="2107,594 1957,625" fill="none" stroke="#111" stroke-width="1.0" stroke-linecap="round" stroke-linejoin="round" />
<polyline points="657,709 823,754" fill="none" stroke="#111" stroke-width="1.2" stroke-linecap="round" stroke-linejoin="round" />
<polyline points="782,778 1089,538" fill="none" stroke="#111" stroke-width="1.6" stroke-linecap="round" stroke-linejoin="round" />
<polyline points="789,800 1052,632" fill="none" stroke="#111" stroke-width="2.6" stroke-linecap="round" stroke-linejoin="round" />
<polyline points="1052,628 1056,1176" fill="none" stroke="#111" stroke-width="2.2" stroke-linecap="round" stroke-linejoin="round" />
<polyline points="1072,574 1072,630" fill="none" stroke="#111" stroke-width="1.0" stroke-linecap="round" stroke-linejoin="round" />
<polyline points="1052,633 1992,727" fill="none" stroke="#111" stroke-width="1.8" stroke-linecap="round" stroke-linejoin="round" />
<polyline points="1957,610 1956,730" fill="none" stroke="#111" stroke-width="1.0" stroke-linecap="round" stroke-linejoin="round" />
<polyline points="1992,722 1974,1102" fill="none" stroke="#111" stroke-width="2.0" stroke-linecap="round" stroke-linejoin="round" />
<polyline points="1198,594 1259,562" fill="none" stroke="#111" stroke-width="1.2" stroke-linecap="round" stroke-linejoin="round" />
<polygon points="1170,714 1932,773 1900,780 1170,723" fill="#a29e9a" />
<polyline points="1176,732 1900,789" fill="none" stroke="#000" stroke-opacity="0.25" stroke-width="8" filter="url(#blur4)"/>
<polyline points="1080,584 1957,618" fill="none" stroke="#000" stroke-opacity="0.2" stroke-width="8" filter="url(#blur4)"/>
<polyline points="1060,641 1992,735" fill="none" stroke="#000" stroke-opacity="0.2" stroke-width="8" filter="url(#blur4)"/>
<polyline points="1184,735 1184,1140" fill="none" stroke="#000" stroke-opacity="0.2" stroke-width="8" filter="url(#blur4)"/>
<polyline points="1180,817 1890,846" fill="none" stroke="#000" stroke-opacity="0.16" stroke-width="7" filter="url(#blur4)"/>
<polyline points="1180,901 1890,907" fill="none" stroke="#000" stroke-opacity="0.16" stroke-width="7" filter="url(#blur4)"/>
<polyline points="1180,985 1890,968" fill="none" stroke="#000" stroke-opacity="0.16" stroke-width="7" filter="url(#blur4)"/>
<polyline points="1180,1067 1890,1029" fill="none" stroke="#000" stroke-opacity="0.16" stroke-width="7" filter="url(#blur4)"/>
<polyline points="1170,710.7 1932,769.8" fill="none" stroke="#111" stroke-width="2.0" stroke-linecap="round" stroke-linejoin="round" />
<polyline points="1170,714 1932,773" fill="none" stroke="#111" stroke-width="2.0" stroke-linecap="round" stroke-linejoin="round" />
<polyline points="1170,723 1900,780" fill="none" stroke="#111" stroke-width="2.2" stroke-linecap="round" stroke-linejoin="round" />
<polyline points="1170,726 1900,783" fill="none" stroke="#111" stroke-width="2.2" stroke-linecap="round" stroke-linejoin="round" />
<polyline points="1174,706 1175,1150" fill="none" stroke="#111" stroke-width="2.0" stroke-linecap="round" stroke-linejoin="round" />
<polyline points="1170,810 1899,840" fill="none" stroke="#111" stroke-width="2.2" stroke-linecap="round" stroke-linejoin="round" />
<polyline points="1170,895 1895,901" fill="none" stroke="#111" stroke-width="2.2" stroke-linecap="round" stroke-linejoin="round" />
<polyline points="1170,979 1895,962" fill="none" stroke="#111" stroke-width="2.2" stroke-linecap="round" stroke-linejoin="round" />
<polyline points="1170,1061 1892,1023" fill="none" stroke="#111" stroke-width="2.2" stroke-linecap="round" stroke-linejoin="round" />
<polyline points="1170,1143 1895,1085" fill="none" stroke="#111" stroke-width="2.2" stroke-linecap="round" stroke-linejoin="round" />
<polyline points="1170,1152 1920,1088" fill="none" stroke="#777" stroke-width="2.6" stroke-linecap="round" stroke-linejoin="round" />
<polyline points="1895,765 1885,1088" fill="none" stroke="#111" stroke-width="2.4" stroke-linecap="round" stroke-linejoin="round" />
<polyline points="1905,760 1898,1090" fill="none" stroke="#111" stroke-width="1.8" stroke-linecap="round" stroke-linejoin="round" />
<polyline points="1912,760 1905,1090" fill="none" stroke="#111" stroke-width="1.8" stroke-linecap="round" stroke-linejoin="round" />
<polyline points="1930,757 1918,1092" fill="none" stroke="#111" stroke-width="1.4" stroke-linecap="round" stroke-linejoin="round" />
<polyline points="1100,1169 1945,1090" fill="none" stroke="#111" stroke-width="1.6" stroke-linecap="round" stroke-linejoin="round" />
<polyline points="1945,1090 2332,1175" fill="none" stroke="#111" stroke-width="1.6" stroke-linecap="round" stroke-linejoin="round" />
<polyline points="1257,1335 2310,1167" fill="none" stroke="#111" stroke-width="1.6" stroke-linecap="round" stroke-linejoin="round" />
<polyline points="1985,738 2268,701" fill="none" stroke="#111" stroke-width="1.0" stroke-linecap="round" stroke-linejoin="round" />
<polyline points="2240,718 2332,706" fill="none" stroke="#111" stroke-width="1.0" stroke-linecap="round" stroke-linejoin="round" />
<polyline points="1980,862 2332,847" fill="none" stroke="#111" stroke-width="1.0" stroke-linecap="round" stroke-linejoin="round" />
<polyline points="1980,886 2332,876" fill="none" stroke="#111" stroke-width="1.0" stroke-linecap="round" stroke-linejoin="round" />
<polygon points="2240,717 2272,700 2290,714" fill="#c4c0bc" stroke="#222" stroke-width="0.8"/>
<polyline points="1962,977 2290,988" fill="none" stroke="#111" stroke-width="1.0" stroke-linecap="round" stroke-linejoin="round" />
<polyline points="2283,1000 2280,1175" fill="none" stroke="#111" stroke-width="1.0" stroke-linecap="round" stroke-linejoin="round" />
<polyline points="2270,1000 2258,1178" fill="none" stroke="#111" stroke-width="1.0" stroke-linecap="round" stroke-linejoin="round" />
<polyline points="2262,1045 2332,1058" fill="none" stroke="#111" stroke-width="1.0" stroke-linecap="round" stroke-linejoin="round" />
<polyline points="681,798 686,1005" fill="none" stroke="#111" stroke-width="2.2" stroke-linecap="round" stroke-linejoin="round" />
<polyline points="660,797 792,800" fill="none" stroke="#111" stroke-width="2.4" stroke-linecap="round" stroke-linejoin="round" />
<polyline points="788,798 792,962" fill="none" stroke="#111" stroke-width="2.2" stroke-linecap="round" stroke-linejoin="round" />
<polyline points="677,816.5 768,817.5" fill="none" stroke="#111" stroke-width="1.8" stroke-linecap="round" stroke-linejoin="round" />
<polyline points="677,829.5 770,830.5" fill="none" stroke="#111" stroke-width="1.8" stroke-linecap="round" stroke-linejoin="round" />
<polyline points="677,843 772,844" fill="none" stroke="#111" stroke-width="1.8" stroke-linecap="round" stroke-linejoin="round" />
<polyline points="677,856.4 775,857.4" fill="none" stroke="#111" stroke-width="1.8" stroke-linecap="round" stroke-linejoin="round" />
<polyline points="677,870.4 777,871.4" fill="none" stroke="#111" stroke-width="1.8" stroke-linecap="round" stroke-linejoin="round" />
<polyline points="677,884 780,885" fill="none" stroke="#111" stroke-width="1.8" stroke-linecap="round" stroke-linejoin="round" />
<polyline points="677,899 783,900" fill="none" stroke="#111" stroke-width="1.8" stroke-linecap="round" stroke-linejoin="round" />
<polyline points="677,913.6 786,914.6" fill="none" stroke="#111" stroke-width="1.8" stroke-linecap="round" stroke-linejoin="round" />
<polyline points="677,929 789,930" fill="none" stroke="#111" stroke-width="1.8" stroke-linecap="round" stroke-linejoin="round" />
<polyline points="677,944.4 791,945.4" fill="none" stroke="#111" stroke-width="1.8" stroke-linecap="round" stroke-linejoin="round" />
<polyline points="680,961.7 813,962.7" fill="none" stroke="#111" stroke-width="1.8" stroke-linecap="round" stroke-linejoin="round" />
<polyline points="681,984.7 817,985.7" fill="none" stroke="#111" stroke-width="1.8" stroke-linecap="round" stroke-linejoin="round" />
<polyline points="686,1003 820,1004" fill="none" stroke="#111" stroke-width="1.8" stroke-linecap="round" stroke-linejoin="round" />
<polyline points="705,1021 823,1022" fill="none" stroke="#111" stroke-width="1.8" stroke-linecap="round" stroke-linejoin="round" />
<polyline points="722,1040.8 826,1041.8" fill="none" stroke="#111" stroke-width="1.8" stroke-linecap="round" stroke-linejoin="round" />
<polyline points="760,805 790,962" fill="none" stroke="#111" stroke-width="1.2" stroke-linecap="round" stroke-linejoin="round" />
<polyline points="809,962 809,986" fill="none" stroke="#111" stroke-width="1.4" stroke-linecap="round" stroke-linejoin="round" />
<polyline points="813,980 813,1004" fill="none" stroke="#111" stroke-width="1.4" stroke-linecap="round" stroke-linejoin="round" />
<polyline points="817,998 817,1022" fill="none" stroke="#111" stroke-width="1.4" stroke-linecap="round" stroke-linejoin="round" />
<polyline points="821,1018 823,1042" fill="none" stroke="#111" stroke-width="1.4" stroke-linecap="round" stroke-linejoin="round" />
<polygon points="832,810 846,806 850,1046 837,1048" fill="#a9a5a1" />
<polyline points="832,808 837,1048" fill="none" stroke="#111" stroke-width="2.2" stroke-linecap="round" stroke-linejoin="round" />
<polyline points="845,806 849,1046" fill="none" stroke="#111" stroke-width="2.2" stroke-linecap="round" stroke-linejoin="round" />
<polyline points="849,800 855,1050" fill="none" stroke="#111" stroke-width="1.8" stroke-linecap="round" stroke-linejoin="round" />
<polyline points="828,813 853,800" fill="none" stroke="#111" stroke-width="2.2" stroke-linecap="round" stroke-linejoin="round" />
<polyline points="825,1040 1257,1285" fill="none" stroke="#555" stroke-width="2.6" stroke-linecap="round" stroke-linejoin="round" />
<polyline points="686,1005 744,1060" fill="none" stroke="#888" stroke-width="1.0" stroke-linecap="round" stroke-linejoin="round" />
<polyline points="890,1207 890,1395" fill="none" stroke="#999" stroke-width="1.0" stroke-linecap="round" stroke-linejoin="round" />
<polyline points="887,1337 1257,1285" fill="none" stroke="#666" stroke-width="2.4" stroke-linecap="round" stroke-linejoin="round" />
<polyline points="890,1395 1257,1332" fill="none" stroke="#555" stroke-width="2.4" stroke-linecap="round" stroke-linejoin="round" />
<polyline points="1257,1283 1257,1335" fill="none" stroke="#555" stroke-width="1.6" stroke-linecap="round" stroke-linejoin="round" />
<polyline points="716,735 718,808" fill="none" stroke="#111" stroke-width="1.8" stroke-linecap="round" stroke-linejoin="round" />
<polyline points="722.5,735 724.5,808" fill="none" stroke="#111" stroke-width="1.8" stroke-linecap="round" stroke-linejoin="round" />
<polyline points="740,735 742,808" fill="none" stroke="#111" stroke-width="1.8" stroke-linecap="round" stroke-linejoin="round" />
<polyline points="747,735 749,808" fill="none" stroke="#111" stroke-width="1.8" stroke-linecap="round" stroke-linejoin="round" />
<polyline points="755,735 757,808" fill="none" stroke="#111" stroke-width="1.8" stroke-linecap="round" stroke-linejoin="round" />
<polyline points="761,735 763,808" fill="none" stroke="#111" stroke-width="1.8" stroke-linecap="round" stroke-linejoin="round" />
<polyline points="432,789.5 680,798" fill="none" stroke="#111" stroke-width="2.0" stroke-linecap="round" stroke-linejoin="round" />
<polyline points="588,749 589,800" fill="none" stroke="#111" stroke-width="2.0" stroke-linecap="round" stroke-linejoin="round" />
<polyline points="105,596 250,601 389,621 560,642 663,647" fill="none" stroke="#111" stroke-width="1.0" stroke-linecap="round" stroke-linejoin="round" />
<polyline points="105,602 280,610 400,628 562,644 690,653" fill="none" stroke="#111" stroke-width="1.0" stroke-linecap="round" stroke-linejoin="round" />
<polyline points="105,608 232,626" fill="none" stroke="#111" stroke-width="1.0" stroke-linecap="round" stroke-linejoin="round" />
<polyline points="250,623 382,630" fill="none" stroke="#111" stroke-width="1.0" stroke-linecap="round" stroke-linejoin="round" />
<polyline points="389,640 532,648" fill="none" stroke="#111" stroke-width="1.0" stroke-linecap="round" stroke-linejoin="round" />
<polyline points="105,716 250,726" fill="none" stroke="#111" stroke-width="1.0" stroke-linecap="round" stroke-linejoin="round" />
<polyline points="105,730 430,746.5 685,759" fill="none" stroke="#111" stroke-width="1.2" stroke-linecap="round" stroke-linejoin="round" />
<polyline points="270,727 387,734" fill="none" stroke="#111" stroke-width="1.0" stroke-linecap="round" stroke-linejoin="round" />
<polyline points="430,748 672,758" fill="none" stroke="#111" stroke-width="2.2" stroke-linecap="round" stroke-linejoin="round" />
<polyline points="250,602 262,718" fill="none" stroke="#111" stroke-width="1.0" stroke-linecap="round" stroke-linejoin="round" />
<polyline points="254,622 266,718" fill="none" stroke="#111" stroke-width="1.0" stroke-linecap="round" stroke-linejoin="round" />
<polyline points="397,614 402,733" fill="none" stroke="#111" stroke-width="1.0" stroke-linecap="round" stroke-linejoin="round" />
<polyline points="404,606 415,753" fill="none" stroke="#111" stroke-width="1.0" stroke-linecap="round" stroke-linejoin="round" />
<polyline points="542,655 546,770" fill="none" stroke="#111" stroke-width="1.0" stroke-linecap="round" stroke-linejoin="round" />
<polyline points="550,655 548,770" fill="none" stroke="#111" stroke-width="1.0" stroke-linecap="round" stroke-linejoin="round" />
<polyline points="655,710 665,762" fill="none" stroke="#111" stroke-width="1.0" stroke-linecap="round" stroke-linejoin="round" />
<polyline points="105,1395 890,1207" fill="none" stroke="#999" stroke-width="1.0" stroke-linecap="round" stroke-linejoin="round" />
<polyline points="105,995 655,945" fill="none" stroke="#999" stroke-width="1.0" stroke-linecap="round" stroke-linejoin="round" />
<polyline points="590,965 606,943" fill="none" stroke="#999" stroke-width="1.0" stroke-linecap="round" stroke-linejoin="round" />
<polyline points="105,1107 686,1052" fill="none" stroke="#aaa" stroke-width="1.0" stroke-linecap="round" stroke-linejoin="round" />
<polyline points="105,1124 680,1203" fill="none" stroke="#fafafa" stroke-width="1.2" stroke-linecap="round" stroke-linejoin="round" />
<polyline points="641,1053 678,1203" fill="none" stroke="#888" stroke-width="1.0" stroke-linecap="round" stroke-linejoin="round" />
<clipPath id="cpcurve"><path d="M895 1400 C960 1500 1150 1630 1545 1787 L2332 1787 L2332 1300 L1257 1335 Z"/></clipPath><g clip-path="url(#cpcurve)"><path d="M890 1392 C955 1492 1145 1622 1540 1779" fill="none" stroke="#000" stroke-opacity=".14" stroke-width="26" filter="url(#blur14)"/></g>
<path d="M895 1400 C960 1500 1150 1630 1545 1787" fill="none" stroke="#8a8784" stroke-width="1.1"/>
</svg></svg><svg style="position:absolute;left:0;top:0" width="2360" height="2008" viewBox="0 0 2360 2008"><defs><clipPath id="tbclip"><rect x="105" y="1785" width="2227" height="165"/></clipPath></defs><g clip-path="url(#tbclip)"><circle cx="1515.8" cy="1911.3" r="44.5" fill="none" stroke="#000" stroke-width="3"/><line x1="1561" y1="1911.3" x2="2332" y2="1911.3" stroke="#000" stroke-width="3"/></g><text x="1516" y="1921" text-anchor="middle" font-family="Liberation Sans" font-size="26">3</text><text x="1581" y="1904" font-family="Liberation Sans" font-size="34.4">PERSPECTIVE 3 - OPTION A</text></svg>
<div style="position:absolute;left:0px;top:262px;width:86px;height:30px;background:linear-gradient(#e2e2e2,#d6d6d6);border:1px solid #c6c6c6;border-left:none;border-radius:0 3px 3px 0;box-sizing:border-box;"></div>
<div style="position:absolute;left:55.0px;top:263.4px;font-size:22px;line-height:1.15;white-space:nowrap;color:#444;font-weight:bold;">?</div>
<div style="position:absolute;left:2360px;top:0px;width:12px;height:2008px;background:#bcbcbc;"></div>
<div style="position:absolute;left:2854px;top:0px;width:12px;height:2008px;background:#bcbcbc;"></div>
<div style="position:absolute;left:2364px;top:1593px;width:4px;height:5px;background:#6e6e6e;"></div>
<div style="position:absolute;left:2364px;top:1602px;width:4px;height:5px;background:#6e6e6e;"></div>
<div style="position:absolute;left:2364px;top:1611px;width:4px;height:5px;background:#6e6e6e;"></div>
<div style="position:absolute;left:2858px;top:1593px;width:4px;height:5px;background:#6e6e6e;"></div>
<div style="position:absolute;left:2858px;top:1602px;width:4px;height:5px;background:#6e6e6e;"></div>
<div style="position:absolute;left:2858px;top:1611px;width:4px;height:5px;background:#6e6e6e;"></div>
<div style="position:absolute;left:2372px;top:0px;width:482px;height:30px;background:#e2e2e2;"></div>
<div style="position:absolute;left:2372px;top:0px;width:482px;height:1px;background:#b0b0b0;"></div>
<svg style="position:absolute;left:2380px;top:7px;overflow:visible" width="17" height="17" viewBox="0 0 17 17"><path d="M2.5 2.5 L14.5 14.5 M14.5 2.5 L2.5 14.5" stroke="#4a4a4a" stroke-width="3.2"/></svg>
<div style="position:absolute;left:2410.5px;top:1.9px;font-size:22px;line-height:1.15;white-space:nowrap;color:#1a1a1a;letter-spacing:0.65px;">Navigation - Sheet Layers</div>
<svg style="position:absolute;left:2793px;top:8px;overflow:visible" width="18" height="15" viewBox="0 0 18 15"><path d="M0 1.5H18 M0 7.5H18 M0 13.5H18" stroke="#1a1a1a" stroke-width="2.6"/></svg>
<div style="position:absolute;left:2822.0px;top:0.9px;font-size:22px;line-height:1.15;white-space:nowrap;color:#1a1a1a;font-weight:bold;">?</div>
<div style="position:absolute;left:2372px;top:30px;width:482px;height:52px;background:#c1c1c1;"></div>
<div style="position:absolute;left:2426px;top:38px;width:48px;height:44px;background:#ebebeb;border-radius:8px 8px 0 0;"></div>
<svg style="position:absolute;left:2414px;top:70px;overflow:visible" width="72" height="12" viewBox="0 0 72 12"><path d="M0 12 C8 12 12 10 12 0 L12 12 Z" fill="#ebebeb"/><path d="M72 12 C64 12 60 10 60 0 L60 12 Z" fill="#ebebeb"/></svg>
<svg style="position:absolute;left:2388px;top:45px;overflow:visible" width="32" height="30" viewBox="0 0 32 30"><g stroke="#111" stroke-width="1.8" fill="#d6d6f4"><path d="M15 17 L28 21 L15 26 L2 21 Z"/><path d="M15 11 L28 15 L15 20 L2 15 Z"/><path d="M15 4 L28 9 L15 14 L2 9 Z"/></g></svg>
<svg style="position:absolute;left:2432px;top:44px;overflow:visible" width="36" height="32" viewBox="0 0 36 32"><path d="M2 2 H33 V22 L24 30 H2 Z" fill="#f6f6f6" stroke="#111" stroke-width="2.2"/><path d="M6 6 H29 V20 L22 26 H6 Z" fill="none" stroke="#333" stroke-width="1.2"/><path d="M24 30 V22 H33" fill="#ddd" stroke="#111" stroke-width="1.6"/></svg>
<svg style="position:absolute;left:2479px;top:45px;overflow:visible" width="30" height="28" viewBox="0 0 30 28"><path d="M2 8 V2 H8 M22 2 H28 V8 M28 20 V26 H22 M8 26 H2 V20" fill="none" stroke="#1c2a6a" stroke-width="2.4"/><path d="M6 22 L11 12 L15 16 L19 10 L24 22 Z" fill="#a8a8e0" stroke="#1c2a6a" stroke-width="1"/></svg>
<div style="position:absolute;left:2518px;top:46px;width:2px;height:28px;background:#333;"></div>
<svg style="position:absolute;left:2525px;top:45px;overflow:visible" width="32" height="30" viewBox="0 0 32 30"><path d="M2 2 H22 L30 10 V29 H2 Z" fill="#f6f6f6" stroke="#111" stroke-width="2"/><ellipse cx="14" cy="15" rx="10.5" ry="6.5" fill="#fff" stroke="#1c2a6a" stroke-width="1.8"/><circle cx="14" cy="15" r="4" fill="#7880b8" stroke="#1c2a6a" stroke-width="1"/></svg>
<div style="position:absolute;left:2564px;top:46px;width:2px;height:28px;background:#333;"></div>
<svg style="position:absolute;left:2571px;top:45px;overflow:visible" width="34" height="30" viewBox="0 0 34 30"><path d="M8 2 H24 L32 10 V29 H8 Z" fill="#f6f6f6" stroke="#111" stroke-width="2"/><path d="M3 20 C1 12 8 9 18 10 L18 6 L26 13 L18 20 L18 16 C10 15 6 17 8 24 C5 24 4 22 3 20 Z" fill="#eee" stroke="#111" stroke-width="1.8"/></svg>
<div style="position:absolute;left:2610px;top:46px;width:2px;height:28px;background:#333;"></div>
<div style="position:absolute;left:2372px;top:82px;width:482px;height:78px;background:#ececec;"></div>
<div style="position:absolute;left:2380.5px;top:88.4px;font-size:18.5px;line-height:1.15;white-space:nowrap;color:#222;letter-spacing:0.6px;">Filter:</div>
<div style="position:absolute;left:2435px;top:86px;width:415px;height:26px;background:#fff;border-radius:6px;box-shadow:0 .5px 1.5px rgba(0,0,0,.3),0 0 0 .5px rgba(0,0,0,.08);"></div>
<div style="position:absolute;left:2445.5px;top:87.9px;font-size:18.5px;line-height:1.15;white-space:nowrap;color:#1a1a1a;">&lt;All Layers&gt;</div>
<div style="position:absolute;left:2828px;top:89.5px;width:18px;height:18px;background:linear-gradient(#5a96fa,#3877f2);border-radius:4px;"></div>
<svg style="position:absolute;left:2828px;top:89.5px;overflow:visible" width="18" height="18" viewBox="0 0 18 18"><path d="M5.5 7 L9 3.8 L12.5 7 M5.5 11 L9 14.2 L12.5 11" stroke="#fff" stroke-width="1.7" fill="none"/></svg>
<div style="position:absolute;left:2378px;top:120px;width:470px;height:32px;background:#fff;border-radius:8px;box-shadow:0 .5px 1.5px rgba(0,0,0,.3),0 0 0 .5px rgba(0,0,0,.1);"></div>
<svg style="position:absolute;left:2392px;top:124px;overflow:visible" width="24" height="24" viewBox="0 0 24 24"><circle cx="9.5" cy="9.5" r="7.5" fill="none" stroke="#222" stroke-width="2"/><path d="M14.8 14.8 L21 21" stroke="#222" stroke-width="2.4" stroke-linecap="round"/></svg>
<div style="position:absolute;left:2430.5px;top:123.4px;font-size:21.5px;line-height:1.15;white-space:nowrap;color:#c0c0c0;letter-spacing:0.5px;">Search</div>
<div style="position:absolute;left:2374px;top:160px;width:478px;height:1844px;background:#fff;"></div>
<div style="position:absolute;left:2374px;top:160px;width:478px;height:54px;background:#fbfbfb;border-bottom:2px solid #e2e2e2;box-sizing:border-box;"></div>
<div style="position:absolute;left:2432px;top:172px;width:2px;height:31px;background:#dedede;"></div>
<div style="position:absolute;left:2598px;top:172px;width:2px;height:31px;background:#dedede;"></div>
<div style="position:absolute;left:2444.5px;top:174.9px;font-size:22.5px;line-height:1.15;white-space:nowrap;color:#1e1e1e;letter-spacing:0.2px;">Sheet Num...</div>
<div style="position:absolute;left:2610.5px;top:174.9px;font-size:22.5px;line-height:1.15;white-space:nowrap;color:#1e1e1e;letter-spacing:0.6px;">Sheet Title</div>
<div style="position:absolute;left:2374px;top:214px;width:478px;height:1100px;overflow:hidden;">
<div style="position:absolute;left:66.5px;top:5.4px;font-size:20.5px;line-height:1.15;white-space:nowrap;color:#1a1a1a;">CD001</div>
<div style="position:absolute;left:232.5px;top:5.4px;font-size:20.5px;line-height:1.15;white-space:nowrap;color:#1a1a1a;">SITE PLAN</div>
<div style="position:absolute;left:66.5px;top:35.4px;font-size:20.5px;line-height:1.15;white-space:nowrap;color:#1a1a1a;">CD002</div>
<div style="position:absolute;left:232.5px;top:35.4px;font-size:20.5px;line-height:1.15;white-space:nowrap;color:#1a1a1a;">PLAN</div>
<div style="position:absolute;left:66.5px;top:65.4px;font-size:20.5px;line-height:1.15;white-space:nowrap;color:#1a1a1a;">CD005</div>
<div style="position:absolute;left:232.5px;top:65.4px;font-size:20.5px;line-height:1.15;white-space:nowrap;color:#1a1a1a;">TEST PLAN</div>
<div style="position:absolute;left:66.5px;top:95.4px;font-size:20.5px;line-height:1.15;white-space:nowrap;color:#1a1a1a;">CD003</div>
<div style="position:absolute;left:232.5px;top:95.4px;font-size:20.5px;line-height:1.15;white-space:nowrap;color:#1a1a1a;">SECTIONS</div>
<div style="position:absolute;left:66.5px;top:125.4px;font-size:20.5px;line-height:1.15;white-space:nowrap;color:#1a1a1a;">CD004</div>
<div style="position:absolute;left:232.5px;top:125.4px;font-size:20.5px;line-height:1.15;white-space:nowrap;color:#1a1a1a;">PERSPECTIVES</div>
<div style="position:absolute;left:66.5px;top:155.4px;font-size:20.5px;line-height:1.15;white-space:nowrap;color:#1a1a1a;">SK001</div>
<div style="position:absolute;left:232.5px;top:155.4px;font-size:20.5px;line-height:1.15;white-space:nowrap;color:#1a1a1a;">RAISED GARAGE LEVEL SKETCH</div>
<div style="position:absolute;left:66.5px;top:185.4px;font-size:20.5px;line-height:1.15;white-space:nowrap;color:#1a1a1a;">SK002</div>
<div style="position:absolute;left:232.5px;top:185.4px;font-size:20.5px;line-height:1.15;white-space:nowrap;color:#1a1a1a;">SKILLION ROOF SKETCH</div>
<div style="position:absolute;left:66.5px;top:215.4px;font-size:20.5px;line-height:1.15;white-space:nowrap;color:#1a1a1a;">SK003</div>
<div style="position:absolute;left:232.5px;top:215.4px;font-size:20.5px;line-height:1.15;white-space:nowrap;color:#1a1a1a;">BUTTERFLY ROOF SKETCH</div>
<div style="position:absolute;left:66.5px;top:245.4px;font-size:20.5px;line-height:1.15;white-space:nowrap;color:#1a1a1a;">------------</div>
<div style="position:absolute;left:232.5px;top:245.4px;font-size:20.5px;line-height:1.15;white-space:nowrap;color:#1a1a1a;">----------------------------------------</div>
<div style="position:absolute;left:66.5px;top:275.4px;font-size:20.5px;line-height:1.15;white-space:nowrap;color:#1a1a1a;">DD001</div>
<div style="position:absolute;left:232.5px;top:275.4px;font-size:20.5px;line-height:1.15;white-space:nowrap;color:#1a1a1a;">COVER PAGE</div>
<div style="position:absolute;left:66.5px;top:305.4px;font-size:20.5px;line-height:1.15;white-space:nowrap;color:#1a1a1a;">DD101</div>
<div style="position:absolute;left:232.5px;top:305.4px;font-size:20.5px;line-height:1.15;white-space:nowrap;color:#1a1a1a;">PLAN - SITE</div>
<div style="position:absolute;left:66.5px;top:335.4px;font-size:20.5px;line-height:1.15;white-space:nowrap;color:#1a1a1a;">DD102</div>
<div style="position:absolute;left:232.5px;top:335.4px;font-size:20.5px;line-height:1.15;white-space:nowrap;color:#1a1a1a;">PLAN - GROUND FLOOR</div>
<div style="position:absolute;left:66.5px;top:365.4px;font-size:20.5px;line-height:1.15;white-space:nowrap;color:#1a1a1a;">DD103</div>
<div style="position:absolute;left:232.5px;top:365.4px;font-size:20.5px;line-height:1.15;white-space:nowrap;color:#1a1a1a;">PLAN - FIRST FLOOR</div>
<div style="position:absolute;left:66.5px;top:395.4px;font-size:20.5px;line-height:1.15;white-space:nowrap;color:#1a1a1a;">DD104</div>
<div style="position:absolute;left:232.5px;top:395.4px;font-size:20.5px;line-height:1.15;white-space:nowrap;color:#1a1a1a;">PLAN - ROOF</div>
<div style="position:absolute;left:66.5px;top:425.4px;font-size:20.5px;line-height:1.15;white-space:nowrap;color:#1a1a1a;">DD201</div>
<div style="position:absolute;left:232.5px;top:425.4px;font-size:20.5px;line-height:1.15;white-space:nowrap;color:#1a1a1a;">ELEVATION - FRONT</div>
<div style="position:absolute;left:66.5px;top:455.4px;font-size:20.5px;line-height:1.15;white-space:nowrap;color:#1a1a1a;">DD202</div>
<div style="position:absolute;left:232.5px;top:455.4px;font-size:20.5px;line-height:1.15;white-space:nowrap;color:#1a1a1a;">ELEVATION - EAST</div>
<div style="position:absolute;left:66.5px;top:485.4px;font-size:20.5px;line-height:1.15;white-space:nowrap;color:#1a1a1a;">DD203</div>
<div style="position:absolute;left:232.5px;top:485.4px;font-size:20.5px;line-height:1.15;white-space:nowrap;color:#1a1a1a;">ELEVATION - REAR</div>
<div style="position:absolute;left:66.5px;top:515.4px;font-size:20.5px;line-height:1.15;white-space:nowrap;color:#1a1a1a;">DD204</div>
<div style="position:absolute;left:232.5px;top:515.4px;font-size:20.5px;line-height:1.15;white-space:nowrap;color:#1a1a1a;">ELEVATION - WEST</div>
<div style="position:absolute;left:66.5px;top:545.4px;font-size:20.5px;line-height:1.15;white-space:nowrap;color:#1a1a1a;">DD601</div>
<div style="position:absolute;left:232.5px;top:545.4px;font-size:20.5px;line-height:1.15;white-space:nowrap;color:#1a1a1a;">SHADOW DIAGRAMS [JUNE]</div>
<div style="position:absolute;left:66.5px;top:575.4px;font-size:20.5px;line-height:1.15;white-space:nowrap;color:#1a1a1a;">DD602</div>
<div style="position:absolute;left:232.5px;top:575.4px;font-size:20.5px;line-height:1.15;white-space:nowrap;color:#1a1a1a;">SHADOW DIAGRAMS [JUNE]</div>
<div style="position:absolute;left:66.5px;top:605.4px;font-size:20.5px;line-height:1.15;white-space:nowrap;color:#1a1a1a;">DD603</div>
<div style="position:absolute;left:232.5px;top:605.4px;font-size:20.5px;line-height:1.15;white-space:nowrap;color:#1a1a1a;">SHADOW DIAGRAMS [JUNE]</div>
<div style="position:absolute;left:66.5px;top:635.4px;font-size:20.5px;line-height:1.15;white-space:nowrap;color:#1a1a1a;">DD901</div>
<div style="position:absolute;left:232.5px;top:635.4px;font-size:20.5px;line-height:1.15;white-space:nowrap;color:#1a1a1a;">PERSPECTIVES</div>
<div style="position:absolute;left:66.5px;top:665.4px;font-size:20.5px;line-height:1.15;white-space:nowrap;color:#1a1a1a;">DD230220</div>
<div style="position:absolute;left:232.5px;top:665.4px;font-size:20.5px;line-height:1.15;white-space:nowrap;color:#1a1a1a;">PLAN - GROUND FLOOR</div>
<div style="position:absolute;left:66.5px;top:695.4px;font-size:20.5px;line-height:1.15;white-space:nowrap;color:#1a1a1a;">DD230228</div>
<div style="position:absolute;left:232.5px;top:695.4px;font-size:20.5px;line-height:1.15;white-space:nowrap;color:#1a1a1a;">WORKING SECTION</div>
<div style="position:absolute;left:66.5px;top:725.4px;font-size:20.5px;line-height:1.15;white-space:nowrap;color:#1a1a1a;">DD230302</div>
<div style="position:absolute;left:232.5px;top:725.4px;font-size:20.5px;line-height:1.15;white-space:nowrap;color:#1a1a1a;">PLAN - GROUND FLOOR</div>
<div style="position:absolute;left:66.5px;top:755.4px;font-size:20.5px;line-height:1.15;white-space:nowrap;color:#1a1a1a;">DD 230311.01</div>
<div style="position:absolute;left:232.5px;top:755.4px;font-size:20.5px;line-height:1.15;white-space:nowrap;color:#1a1a1a;">PERSPECTIVE - GARAGE ROOF</div>
<div style="position:absolute;left:66.5px;top:785.4px;font-size:20.5px;line-height:1.15;white-space:nowrap;color:#1a1a1a;">DD 230311.02</div>
<div style="position:absolute;left:232.5px;top:785.4px;font-size:20.5px;line-height:1.15;white-space:nowrap;color:#1a1a1a;">PERSPECTIVE - GARAGE ROOF</div>
<div style="position:absolute;left:66.5px;top:815.4px;font-size:20.5px;line-height:1.15;white-space:nowrap;color:#1a1a1a;">DD 230311.03</div>
<div style="position:absolute;left:232.5px;top:815.4px;font-size:20.5px;line-height:1.15;white-space:nowrap;color:#1a1a1a;">PERSPECTIVE - GARAGE ROOF</div>
<div style="position:absolute;left:66.5px;top:845.4px;font-size:20.5px;line-height:1.15;white-space:nowrap;color:#1a1a1a;">DD 230311.04</div>
<div style="position:absolute;left:232.5px;top:845.4px;font-size:20.5px;line-height:1.15;white-space:nowrap;color:#1a1a1a;">PERSPECTIVE - GARAGE ROOF</div>
<div style="position:absolute;left:66.5px;top:875.4px;font-size:20.5px;line-height:1.15;white-space:nowrap;color:#1a1a1a;">DD 230311.05</div>
<div style="position:absolute;left:232.5px;top:875.4px;font-size:20.5px;line-height:1.15;white-space:nowrap;color:#1a1a1a;">PERSPECTIVE - GARAGE ROOF</div>
<div style="position:absolute;left:66.5px;top:905.4px;font-size:20.5px;line-height:1.15;white-space:nowrap;color:#1a1a1a;">SKETCH - DD...</div>
<div style="position:absolute;left:232.5px;top:905.4px;font-size:20.5px;line-height:1.15;white-space:nowrap;color:#1a1a1a;">GARAGE ROOF - OPTION A</div>
<div style="position:absolute;left:66.5px;top:935.4px;font-size:20.5px;line-height:1.15;white-space:nowrap;color:#1a1a1a;font-weight:bold;">SKETCH - D...</div>
<div style="position:absolute;left:232.5px;top:935.4px;font-size:20.5px;line-height:1.15;white-space:nowrap;color:#1a1a1a;">GARAGE ROOF - OPTION B</div>
<div style="position:absolute;left:66.5px;top:965.4px;font-size:20.5px;line-height:1.15;white-space:nowrap;color:#1a1a1a;">SKETCH - DD...</div>
<div style="position:absolute;left:232.5px;top:965.4px;font-size:20.5px;line-height:1.15;white-space:nowrap;color:#1a1a1a;">GARAGE ROOF - OPTION C</div>
<div style="position:absolute;left:66.5px;top:995.4px;font-size:20.5px;line-height:1.15;white-space:nowrap;color:#1a1a1a;">SKETCH - DD...</div>
<div style="position:absolute;left:232.5px;top:995.4px;font-size:20.5px;line-height:1.15;white-space:nowrap;color:#1a1a1a;">GARAGE ROOF - OPTION D</div>
<div style="position:absolute;left:66.5px;top:1025.4px;font-size:20.5px;line-height:1.15;white-space:nowrap;color:#1a1a1a;">SS-DD301</div>
<div style="position:absolute;left:232.5px;top:1025.4px;font-size:20.5px;line-height:1.15;white-space:nowrap;color:#1a1a1a;">SECTIONS</div>
</div>
<svg style="position:absolute;left:2388px;top:1146px;overflow:visible" width="22" height="24" viewBox="0 0 22 24"><path d="M2 13 C4 12 6 13 8 18 C11 10 15 5 20 2 C16 7 12 13 9 22 C7 21 5 16 2 13 Z" fill="#e8e8e8" stroke="#666" stroke-width="1.3"/></svg>
<div style="position:absolute;left:2374px;top:2003px;width:478px;height:1px;background:#d8d8d8;"></div>
<div style="position:absolute;left:2866px;top:0px;width:532px;height:30px;background:#e2e2e2;"></div>
<div style="position:absolute;left:2866px;top:0px;width:532px;height:1px;background:#b0b0b0;"></div>
<svg style="position:absolute;left:2874px;top:7px;overflow:visible" width="17" height="17" viewBox="0 0 17 17"><path d="M2.5 2.5 L14.5 14.5 M14.5 2.5 L2.5 14.5" stroke="#4a4a4a" stroke-width="3.2"/></svg>
<div style="position:absolute;left:2904.5px;top:1.9px;font-size:22px;line-height:1.15;white-space:nowrap;color:#1a1a1a;letter-spacing:0.75px;">Object Info - Shape</div>
<svg style="position:absolute;left:3341px;top:8px;overflow:visible" width="18" height="15" viewBox="0 0 18 15"><path d="M0 1.5H18 M0 7.5H18 M0 13.5H18" stroke="#1a1a1a" stroke-width="2.6"/></svg>
<div style="position:absolute;left:3370.0px;top:0.9px;font-size:22px;line-height:1.15;white-space:nowrap;color:#1a1a1a;font-weight:bold;">?</div>
<div style="position:absolute;left:2866px;top:30px;width:532px;height:52px;background:#c1c1c1;"></div>
<div style="position:absolute;left:2873px;top:38px;width:108px;height:44px;background:#ebebeb;border-radius:9px 9px 0 0;"></div>
<svg style="position:absolute;left:2861px;top:70px;overflow:visible" width="132" height="12" viewBox="0 0 132 12"><path d="M0 12 C8 12 12 10 12 0 L12 12 Z" fill="#ebebeb"/><path d="M132 12 C124 12 120 10 120 0 L120 12 Z" fill="#ebebeb"/></svg>
<div style="position:absolute;left:2895.0px;top:48.0px;font-size:22.5px;line-height:1.15;white-space:nowrap;color:#1a1a1a;letter-spacing:0.2px;">Shape</div>
<div style="position:absolute;left:3009.0px;top:48.0px;font-size:22.5px;line-height:1.15;white-space:nowrap;color:#1a1a1a;letter-spacing:0.2px;">Data</div>
<div style="position:absolute;left:3084px;top:46px;width:2px;height:28px;background:#333;"></div>
<div style="position:absolute;left:3100.5px;top:48.0px;font-size:22.5px;line-height:1.15;white-space:nowrap;color:#1a1a1a;letter-spacing:0.2px;">Render</div>
<div style="position:absolute;left:3189px;top:46px;width:2px;height:28px;background:#333;"></div>
<div style="position:absolute;left:2866px;top:82px;width:532px;height:43px;background:#ececec;"></div>
<div style="position:absolute;left:2871.0px;top:91.4px;font-size:21.5px;line-height:1.15;white-space:nowrap;color:#1a1a1a;font-weight:bold;letter-spacing:0.1px;">Viewport</div>
<div style="position:absolute;left:2868px;top:125px;width:530px;height:1883px;background:#f4f1ec;"></div>
<div style="position:absolute;left:2950px;top:138px;width:440px;height:26px;background:#fff;border-radius:6px;box-shadow:0 .8px 1.5px rgba(0,0,0,.3),0 0 0 .5px rgba(0,0,0,.08);"></div><div style="position:absolute;left:2961.0px;top:140.9px;font-size:18.5px;line-height:1.15;white-space:nowrap;color:#1a1a1a;letter-spacing:0.3px;">None</div><div style="position:absolute;left:3368px;top:142.5px;width:18px;height:18px;background:linear-gradient(#5a96fa,#3877f2);border-radius:4px;"></div><svg style="position:absolute;left:3368px;top:142.5px;overflow:visible" width="18" height="18" viewBox="0 0 18 18"><path d="M5.8 7.5 L9 10.7 L12.2 7.5" stroke="#fff" stroke-width="2" fill="none"/></svg>
<div style="position:absolute;left:2882.0px;top:140.4px;font-size:18.5px;line-height:1.15;white-space:nowrap;color:#2a2a2a;letter-spacing:0.55px;">Class:</div>
<div style="position:absolute;left:2950px;top:180px;width:440px;height:26px;background:#fff;border-radius:6px;box-shadow:0 .8px 1.5px rgba(0,0,0,.3),0 0 0 .5px rgba(0,0,0,.08);"></div><div style="position:absolute;left:2961.0px;top:182.9px;font-size:18.5px;line-height:1.15;white-space:nowrap;color:#1a1a1a;letter-spacing:0.3px;">SKETCH - DD 230320.02 [GARAGE ROOF -...</div><div style="position:absolute;left:3368px;top:184.5px;width:18px;height:18px;background:linear-gradient(#5a96fa,#3877f2);border-radius:4px;"></div><svg style="position:absolute;left:3368px;top:184.5px;overflow:visible" width="18" height="18" viewBox="0 0 18 18"><path d="M5.5 7 L9 3.8 L12.5 7 M5.5 11 L9 14.2 L12.5 11" stroke="#fff" stroke-width="1.7" fill="none"/></svg>
<div style="position:absolute;left:2882.0px;top:182.4px;font-size:18.5px;line-height:1.15;white-space:nowrap;color:#2a2a2a;letter-spacing:0.55px;">Layer:</div>
<div style="position:absolute;left:2878px;top:220px;width:511px;height:179px;background:#ebe8e3;border-radius:9px;box-shadow:inset 0 0 0 1px #e2dfda;"></div>
<svg style="position:absolute;left:2907.6px;top:261.7px;overflow:visible" width="16" height="16" viewBox="0 0 16 16"><circle cx="8" cy="8" r="6.8" fill="#000"/></svg>
<svg style="position:absolute;left:2937.7999999999997px;top:261.7px;overflow:visible" width="16" height="16" viewBox="0 0 16 16"><circle cx="8" cy="8" r="5.8" fill="#fff" stroke="#000" stroke-width="2"/></svg>
<svg style="position:absolute;left:2968.0px;top:261.7px;overflow:visible" width="16" height="16" viewBox="0 0 16 16"><circle cx="8" cy="8" r="5.8" fill="#fff" stroke="#000" stroke-width="2"/></svg>
<svg style="position:absolute;left:2907.6px;top:281.9px;overflow:visible" width="16" height="16" viewBox="0 0 16 16"><circle cx="8" cy="8" r="5.8" fill="#fff" stroke="#000" stroke-width="2"/></svg>
<svg style="position:absolute;left:2937.7999999999997px;top:281.9px;overflow:visible" width="16" height="16" viewBox="0 0 16 16"><circle cx="8" cy="8" r="5.8" fill="#fff" stroke="#000" stroke-width="2"/></svg>
<svg style="position:absolute;left:2968.0px;top:281.9px;overflow:visible" width="16" height="16" viewBox="0 0 16 16"><circle cx="8" cy="8" r="5.8" fill="#fff" stroke="#000" stroke-width="2"/></svg>
<svg style="position:absolute;left:2907.6px;top:302.09999999999997px;overflow:visible" width="16" height="16" viewBox="0 0 16 16"><circle cx="8" cy="8" r="5.8" fill="#fff" stroke="#000" stroke-width="2"/></svg>
<svg style="position:absolute;left:2937.7999999999997px;top:302.09999999999997px;overflow:visible" width="16" height="16" viewBox="0 0 16 16"><circle cx="8" cy="8" r="5.8" fill="#fff" stroke="#000" stroke-width="2"/></svg>
<svg style="position:absolute;left:2968.0px;top:302.09999999999997px;overflow:visible" width="16" height="16" viewBox="0 0 16 16"><circle cx="8" cy="8" r="5.8" fill="#fff" stroke="#000" stroke-width="2"/></svg>
<div style="position:absolute;left:3022.5px;top:235.9px;font-size:18.5px;line-height:1.15;white-space:nowrap;color:#2a2a2a;">ΔX:</div>
<div style="position:absolute;left:3068px;top:235.5px;width:308px;height:25px;background:#fff;border:1px solid #dcdcdc;border-bottom:1.5px solid #b8b8b8;box-sizing:border-box;"></div><div style="position:absolute;left:3076.0px;top:235.9px;font-size:18.5px;line-height:1.15;white-space:nowrap;color:#111;">195</div>
<div style="position:absolute;left:3022.5px;top:276.2px;font-size:18.5px;line-height:1.15;white-space:nowrap;color:#2a2a2a;">ΔY:</div>
<div style="position:absolute;left:3068px;top:275.8px;width:308px;height:25px;background:#fff;border:1px solid #dcdcdc;border-bottom:1.5px solid #b8b8b8;box-sizing:border-box;"></div><div style="position:absolute;left:3076.0px;top:276.2px;font-size:18.5px;line-height:1.15;white-space:nowrap;color:#111;">151</div>
<div style="position:absolute;left:3022.5px;top:316.0px;font-size:18.5px;line-height:1.15;white-space:nowrap;color:#2a2a2a;">X:</div>
<div style="position:absolute;left:3068px;top:315.6px;width:308px;height:25px;background:#fff;border:1px solid #dcdcdc;border-bottom:1.5px solid #b8b8b8;box-sizing:border-box;"></div><div style="position:absolute;left:3076.0px;top:316.0px;font-size:18.5px;line-height:1.15;white-space:nowrap;color:#111;">-197</div>
<div style="position:absolute;left:3022.5px;top:356.1px;font-size:18.5px;line-height:1.15;white-space:nowrap;color:#2a2a2a;">Y:</div>
<div style="position:absolute;left:3068px;top:355.7px;width:308px;height:25px;background:#fff;border:1px solid #dcdcdc;border-bottom:1.5px solid #b8b8b8;box-sizing:border-box;"></div><div style="position:absolute;left:3076.0px;top:356.1px;font-size:18.5px;line-height:1.15;white-space:nowrap;color:#111;">79</div>
<div style="position:absolute;left:2882.0px;top:417.4px;font-size:18.5px;line-height:1.15;white-space:nowrap;color:#2a2a2a;letter-spacing:0.55px;">Rotation:</div>
<div style="position:absolute;left:3077px;top:415.6px;width:311px;height:25px;background:#fff;border:1px solid #dcdcdc;border-bottom:1.5px solid #b8b8b8;box-sizing:border-box;"></div><div style="position:absolute;left:3085.0px;top:416.0px;font-size:18.5px;line-height:1.15;white-space:nowrap;color:#111;">0.00°</div>
<div style="position:absolute;left:2882.0px;top:457.4px;font-size:18.5px;line-height:1.15;white-space:nowrap;color:#2a2a2a;letter-spacing:0.55px;">Crop:</div>
<div style="position:absolute;left:3080.7px;top:456.4px;font-size:18.5px;line-height:1.15;white-space:nowrap;color:#111;">No</div>
<div style="position:absolute;left:2878.5px;top:487px;width:19px;height:19px;background:#f9f8f6;border:1px solid #d6d4d0;border-radius:4px;box-sizing:border-box;"></div><div style="position:absolute;left:2906.5px;top:485.9px;font-size:18.5px;line-height:1.15;white-space:nowrap;color:#b5b3b0;letter-spacing:0.75px;">Crop visible</div>
<div style="position:absolute;left:2878px;top:528.5px;width:512px;height:25.5px;background:#fff;border-radius:6px;box-shadow:0 .8px 1.5px rgba(0,0,0,.3),0 0 0 .5px rgba(0,0,0,.08);"></div><div style="position:absolute;left:2834.0px;width:600px;text-align:center;top:529.9px;font-size:18.5px;line-height:1.15;white-space:nowrap;color:#e8321e;letter-spacing:0.5px;">Update</div>
<div style="position:absolute;left:2882.0px;top:573.4px;font-size:18.5px;line-height:1.15;white-space:nowrap;color:#2a2a2a;letter-spacing:0.55px;">Drawing Title:</div>
<div style="position:absolute;left:3077px;top:571.6px;width:311px;height:25px;background:#fff;border:1px solid #dcdcdc;border-bottom:1.5px solid #b8b8b8;box-sizing:border-box;"></div><div style="position:absolute;left:3085.0px;top:572.0px;font-size:18.5px;line-height:1.15;white-space:nowrap;color:#111;">PERSPECTIVE 3 - OPTION A</div>
<div style="position:absolute;left:2882.0px;top:615.4px;font-size:18.5px;line-height:1.15;white-space:nowrap;color:#2a2a2a;letter-spacing:0.55px;">Drawing Number:</div>
<div style="position:absolute;left:3077px;top:613.7px;width:311px;height:25px;background:#fff;border:1px solid #dcdcdc;border-bottom:1.5px solid #b8b8b8;box-sizing:border-box;"></div><div style="position:absolute;left:3085.0px;top:614.1px;font-size:18.5px;line-height:1.15;white-space:nowrap;color:#111;">3</div>
<div style="position:absolute;left:2882.0px;top:655.4px;font-size:18.5px;line-height:1.15;white-space:nowrap;color:#2a2a2a;letter-spacing:0.55px;">Back Ref. Sheet No.:</div>
<div style="position:absolute;left:2878px;top:688.4px;width:512px;height:25.5px;background:#fff;border-radius:6px;box-shadow:0 .8px 1.5px rgba(0,0,0,.3),0 0 0 .5px rgba(0,0,0,.08);"></div><div style="position:absolute;left:2834.0px;width:600px;text-align:center;top:689.8px;font-size:18.5px;line-height:1.15;white-space:nowrap;color:#1a1a1a;letter-spacing:0.5px;">Select Back References...</div>
<div style="position:absolute;left:2878px;top:726px;width:512px;height:25.5px;background:#fff;border-radius:6px;box-shadow:0 .8px 1.5px rgba(0,0,0,.3),0 0 0 .5px rgba(0,0,0,.08);"></div><div style="position:absolute;left:2834.0px;width:600px;text-align:center;top:727.4px;font-size:18.5px;line-height:1.15;white-space:nowrap;color:#1a1a1a;letter-spacing:0.5px;">Layers...</div>
<div style="position:absolute;left:2878px;top:764px;width:512px;height:25.5px;background:#fff;border-radius:6px;box-shadow:0 .8px 1.5px rgba(0,0,0,.3),0 0 0 .5px rgba(0,0,0,.08);"></div><div style="position:absolute;left:2834.0px;width:600px;text-align:center;top:765.4px;font-size:18.5px;line-height:1.15;white-space:nowrap;color:#1a1a1a;letter-spacing:0.5px;">Classes...</div>
<div style="position:absolute;left:2882.0px;top:806.4px;font-size:18.5px;line-height:1.15;white-space:nowrap;color:#2a2a2a;letter-spacing:0.55px;">Scale:</div>
<div style="position:absolute;left:3076px;top:804px;width:314px;height:26px;background:#fff;border-radius:6px;box-shadow:0 .8px 1.5px rgba(0,0,0,.3),0 0 0 .5px rgba(0,0,0,.08);"></div><div style="position:absolute;left:3087.0px;top:806.9px;font-size:18.5px;line-height:1.15;white-space:nowrap;color:#1a1a1a;letter-spacing:0.3px;">Custom</div><div style="position:absolute;left:3368px;top:808.5px;width:18px;height:18px;background:linear-gradient(#5a96fa,#3877f2);border-radius:4px;"></div><svg style="position:absolute;left:3368px;top:808.5px;overflow:visible" width="18" height="18" viewBox="0 0 18 18"><path d="M5.8 7.5 L9 10.7 L12.2 7.5" stroke="#fff" stroke-width="2" fill="none"/></svg>
<div style="position:absolute;left:2882.0px;top:851.4px;font-size:18.5px;line-height:1.15;white-space:nowrap;color:#2a2a2a;letter-spacing:0.55px;">Custom Scale 1:</div>
<div style="position:absolute;left:3077px;top:849.5px;width:311px;height:25px;background:#fff;border:1px solid #dcdcdc;border-bottom:1.5px solid #b8b8b8;box-sizing:border-box;"></div><div style="position:absolute;left:3085.0px;top:849.9px;font-size:18.5px;line-height:1.15;white-space:nowrap;color:#111;">225.000</div>
<div style="position:absolute;left:2882.0px;top:890.4px;font-size:18.5px;line-height:1.15;white-space:nowrap;color:#2a2a2a;letter-spacing:0.55px;">Detail Level:</div>
<div style="position:absolute;left:3076px;top:888px;width:314px;height:26px;background:#fff;border-radius:6px;box-shadow:0 .8px 1.5px rgba(0,0,0,.3),0 0 0 .5px rgba(0,0,0,.08);"></div><div style="position:absolute;left:3087.0px;top:890.9px;font-size:18.5px;line-height:1.15;white-space:nowrap;color:#1a1a1a;letter-spacing:0.3px;">High</div><div style="position:absolute;left:3368px;top:892.5px;width:18px;height:18px;background:linear-gradient(#5a96fa,#3877f2);border-radius:4px;"></div><svg style="position:absolute;left:3368px;top:892.5px;overflow:visible" width="18" height="18" viewBox="0 0 18 18"><path d="M5.8 7.5 L9 10.7 L12.2 7.5" stroke="#fff" stroke-width="2" fill="none"/></svg>
<div style="position:absolute;left:2878.5px;top:925px;width:19px;height:19px;background:#f9f8f6;border:1px solid #d6d4d0;border-radius:4px;box-sizing:border-box;"></div><div style="position:absolute;left:2906.5px;top:923.9px;font-size:18.5px;line-height:1.15;white-space:nowrap;color:#1e1e1e;letter-spacing:0.75px;">Display planar objects</div>
<div style="position:absolute;left:2882.0px;top:969.4px;font-size:18.5px;line-height:1.15;white-space:nowrap;color:#2a2a2a;letter-spacing:0.55px;">Data Visualization:</div>
<div style="position:absolute;left:3076px;top:968px;width:314px;height:26px;background:#fff;border-radius:6px;box-shadow:0 .8px 1.5px rgba(0,0,0,.3),0 0 0 .5px rgba(0,0,0,.08);"></div><div style="position:absolute;left:3087.0px;top:970.9px;font-size:18.5px;line-height:1.15;white-space:nowrap;color:#1a1a1a;letter-spacing:0.3px;">&lt;None&gt;</div><div style="position:absolute;left:3368px;top:972.5px;width:18px;height:18px;background:linear-gradient(#5a96fa,#3877f2);border-radius:4px;"></div><svg style="position:absolute;left:3368px;top:972.5px;overflow:visible" width="18" height="18" viewBox="0 0 18 18"><path d="M5.8 7.5 L9 10.7 L12.2 7.5" stroke="#fff" stroke-width="2" fill="none"/></svg>
<div style="position:absolute;left:2882.0px;top:1013.4px;font-size:18.5px;line-height:1.15;white-space:nowrap;color:#2a2a2a;letter-spacing:0.55px;">Camera:</div>
<div style="position:absolute;left:3080.7px;top:1012.4px;font-size:18.5px;line-height:1.15;white-space:nowrap;color:#111;">No</div>
<div style="position:absolute;left:2882.0px;top:1050.4px;font-size:18.5px;line-height:1.15;white-space:nowrap;color:#2a2a2a;letter-spacing:0.55px;">View:</div>
<div style="position:absolute;left:3076px;top:1048px;width:314px;height:26px;background:#fff;border-radius:6px;box-shadow:0 .8px 1.5px rgba(0,0,0,.3),0 0 0 .5px rgba(0,0,0,.08);"></div><div style="position:absolute;left:3087.0px;top:1050.9px;font-size:18.5px;line-height:1.15;white-space:nowrap;color:#1a1a1a;letter-spacing:0.3px;">Custom View</div><div style="position:absolute;left:3368px;top:1052.5px;width:18px;height:18px;background:linear-gradient(#5a96fa,#3877f2);border-radius:4px;"></div><svg style="position:absolute;left:3368px;top:1052.5px;overflow:visible" width="18" height="18" viewBox="0 0 18 18"><path d="M5.8 7.5 L9 10.7 L12.2 7.5" stroke="#fff" stroke-width="2" fill="none"/></svg>
<div style="position:absolute;left:2878px;top:1087.7px;width:512px;height:25.5px;background:#fff;border-radius:6px;box-shadow:0 .8px 1.5px rgba(0,0,0,.3),0 0 0 .5px rgba(0,0,0,.08);"></div><div style="position:absolute;left:2834.0px;width:600px;text-align:center;top:1089.1px;font-size:18.5px;line-height:1.15;white-space:nowrap;color:#1a1a1a;letter-spacing:0.5px;">Set View...</div>
<div style="position:absolute;left:2882.0px;top:1129.4px;font-size:18.5px;line-height:1.15;white-space:nowrap;color:#2a2a2a;letter-spacing:0.55px;">Background Render:</div>
<div style="position:absolute;left:3076px;top:1128px;width:314px;height:26px;background:#fff;border-radius:6px;box-shadow:0 .8px 1.5px rgba(0,0,0,.3),0 0 0 .5px rgba(0,0,0,.08);"></div><div style="position:absolute;left:3087.0px;top:1130.9px;font-size:18.5px;line-height:1.15;white-space:nowrap;color:#1a1a1a;letter-spacing:0.3px;">Shaded</div><div style="position:absolute;left:3368px;top:1132.5px;width:18px;height:18px;background:linear-gradient(#5a96fa,#3877f2);border-radius:4px;"></div><svg style="position:absolute;left:3368px;top:1132.5px;overflow:visible" width="18" height="18" viewBox="0 0 18 18"><path d="M5.8 7.5 L9 10.7 L12.2 7.5" stroke="#fff" stroke-width="2" fill="none"/></svg>
<div style="position:absolute;left:2878px;top:1168.4px;width:512px;height:25.5px;background:#fff;border-radius:6px;box-shadow:0 .8px 1.5px rgba(0,0,0,.3),0 0 0 .5px rgba(0,0,0,.08);"></div><div style="position:absolute;left:2834.0px;width:600px;text-align:center;top:1169.8px;font-size:18.5px;line-height:1.15;white-space:nowrap;color:#1a1a1a;letter-spacing:0.5px;">Background Render Settings...</div>
<div style="position:absolute;left:2882.0px;top:1210.4px;font-size:18.5px;line-height:1.15;white-space:nowrap;color:#2a2a2a;letter-spacing:0.55px;">RW Background:</div>
<div style="position:absolute;left:3076px;top:1208px;width:314px;height:26px;background:#fff;border-radius:6px;box-shadow:0 .8px 1.5px rgba(0,0,0,.3),0 0 0 .5px rgba(0,0,0,.08);"></div><div style="position:absolute;left:3087.0px;top:1210.9px;font-size:18.5px;line-height:1.15;white-space:nowrap;color:#1a1a1a;letter-spacing:0.3px;">HDRI Morning</div><div style="position:absolute;left:3368px;top:1212.5px;width:18px;height:18px;background:linear-gradient(#5a96fa,#3877f2);border-radius:4px;"></div><svg style="position:absolute;left:3368px;top:1212.5px;overflow:visible" width="18" height="18" viewBox="0 0 18 18"><path d="M5.8 7.5 L9 10.7 L12.2 7.5" stroke="#fff" stroke-width="2" fill="none"/></svg>
<div style="position:absolute;left:2882.0px;top:1250.4px;font-size:18.5px;line-height:1.15;white-space:nowrap;color:#2a2a2a;letter-spacing:0.55px;">Foreground Render:</div>
<div style="position:absolute;left:3076px;top:1250px;width:314px;height:26px;background:#fff;border-radius:6px;box-shadow:0 .8px 1.5px rgba(0,0,0,.3),0 0 0 .5px rgba(0,0,0,.08);"></div><div style="position:absolute;left:3087.0px;top:1252.9px;font-size:18.5px;line-height:1.15;white-space:nowrap;color:#1a1a1a;letter-spacing:0.3px;">Hidden Line</div><div style="position:absolute;left:3368px;top:1254.5px;width:18px;height:18px;background:linear-gradient(#5a96fa,#3877f2);border-radius:4px;"></div><svg style="position:absolute;left:3368px;top:1254.5px;overflow:visible" width="18" height="18" viewBox="0 0 18 18"><path d="M5.8 7.5 L9 10.7 L12.2 7.5" stroke="#fff" stroke-width="2" fill="none"/></svg>
<div style="position:absolute;left:2878px;top:1290.4px;width:512px;height:25.5px;background:#fff;border-radius:6px;box-shadow:0 .8px 1.5px rgba(0,0,0,.3),0 0 0 .5px rgba(0,0,0,.08);"></div><div style="position:absolute;left:2834.0px;width:600px;text-align:center;top:1291.8px;font-size:18.5px;line-height:1.15;white-space:nowrap;color:#1a1a1a;letter-spacing:0.5px;">Foreground Render Settings...</div>
<div style="position:absolute;left:2882.0px;top:1332.4px;font-size:18.5px;line-height:1.15;white-space:nowrap;color:#2a2a2a;letter-spacing:0.55px;">Projection:</div>
<div style="position:absolute;left:3076px;top:1330px;width:314px;height:26px;background:#fff;border-radius:6px;box-shadow:0 .8px 1.5px rgba(0,0,0,.3),0 0 0 .5px rgba(0,0,0,.08);"></div><div style="position:absolute;left:3087.0px;top:1332.9px;font-size:18.5px;line-height:1.15;white-space:nowrap;color:#1a1a1a;letter-spacing:0.3px;">Perspective</div><div style="position:absolute;left:3368px;top:1334.5px;width:18px;height:18px;background:linear-gradient(#5a96fa,#3877f2);border-radius:4px;"></div><svg style="position:absolute;left:3368px;top:1334.5px;overflow:visible" width="18" height="18" viewBox="0 0 18 18"><path d="M5.8 7.5 L9 10.7 L12.2 7.5" stroke="#fff" stroke-width="2" fill="none"/></svg>
<div style="position:absolute;left:2882.0px;top:1374.4px;font-size:18.5px;line-height:1.15;white-space:nowrap;color:#2a2a2a;letter-spacing:0.55px;">Perspective Type:</div>
<div style="position:absolute;left:3076px;top:1372px;width:314px;height:26px;background:#fff;border-radius:6px;box-shadow:0 .8px 1.5px rgba(0,0,0,.3),0 0 0 .5px rgba(0,0,0,.08);"></div><div style="position:absolute;left:3087.0px;top:1374.9px;font-size:18.5px;line-height:1.15;white-space:nowrap;color:#1a1a1a;letter-spacing:0.3px;">Custom</div><div style="position:absolute;left:3368px;top:1376.5px;width:18px;height:18px;background:linear-gradient(#5a96fa,#3877f2);border-radius:4px;"></div><svg style="position:absolute;left:3368px;top:1376.5px;overflow:visible" width="18" height="18" viewBox="0 0 18 18"><path d="M5.8 7.5 L9 10.7 L12.2 7.5" stroke="#fff" stroke-width="2" fill="none"/></svg>
<div style="position:absolute;left:2882.0px;top:1417.4px;font-size:18.5px;line-height:1.15;white-space:nowrap;color:#2a2a2a;letter-spacing:0.55px;">Perspective Dist:</div>
<div style="position:absolute;left:3077px;top:1417.7px;width:311px;height:25px;background:#fff;border:1px solid #dcdcdc;border-bottom:1.5px solid #b8b8b8;box-sizing:border-box;"></div><div style="position:absolute;left:3085.0px;top:1418.1px;font-size:18.5px;line-height:1.15;white-space:nowrap;color:#111;">4.338</div>
<div style="position:absolute;left:2878px;top:1454px;width:512px;height:25.5px;background:#fff;border-radius:6px;box-shadow:0 .8px 1.5px rgba(0,0,0,.3),0 0 0 .5px rgba(0,0,0,.08);"></div><div style="position:absolute;left:2834.0px;width:600px;text-align:center;top:1455.4px;font-size:18.5px;line-height:1.15;white-space:nowrap;color:#1a1a1a;letter-spacing:0.5px;">Lighting Options...</div>
<div style="position:absolute;left:2878px;top:1492px;width:512px;height:25.5px;background:#fff;border-radius:6px;box-shadow:0 .8px 1.5px rgba(0,0,0,.3),0 0 0 .5px rgba(0,0,0,.08);"></div><div style="position:absolute;left:2834.0px;width:600px;text-align:center;top:1493.4px;font-size:18.5px;line-height:1.15;white-space:nowrap;color:#1a1a1a;letter-spacing:0.5px;">Advanced Properties...</div>
<div style="position:absolute;left:2878px;top:1530px;width:512px;height:25.5px;background:#f7f6f3;border-radius:6px;box-shadow:0 .5px 1px rgba(0,0,0,.12),0 0 0 .5px rgba(0,0,0,.05);"></div><div style="position:absolute;left:2834.0px;width:600px;text-align:center;top:1531.4px;font-size:18.5px;line-height:1.15;white-space:nowrap;color:#b2b0ad;letter-spacing:0.5px;">Elevation Benchmarks...</div>
<div style="position:absolute;left:2878.5px;top:1566px;width:19px;height:19px;background:#f9f8f6;border:1px solid #d6d4d0;border-radius:4px;box-sizing:border-box;"></div><div style="position:absolute;left:2906.5px;top:1564.9px;font-size:18.5px;line-height:1.15;white-space:nowrap;color:#b5b3b0;letter-spacing:0.75px;">Apply image effects</div>
<div style="position:absolute;left:2878px;top:1605.7px;width:512px;height:25.5px;background:#f7f6f3;border-radius:6px;box-shadow:0 .5px 1px rgba(0,0,0,.12),0 0 0 .5px rgba(0,0,0,.05);"></div><div style="position:absolute;left:2834.0px;width:600px;text-align:center;top:1607.1px;font-size:18.5px;line-height:1.15;white-space:nowrap;color:#b2b0ad;letter-spacing:0.5px;">Image Effects...</div>
</body></html>
